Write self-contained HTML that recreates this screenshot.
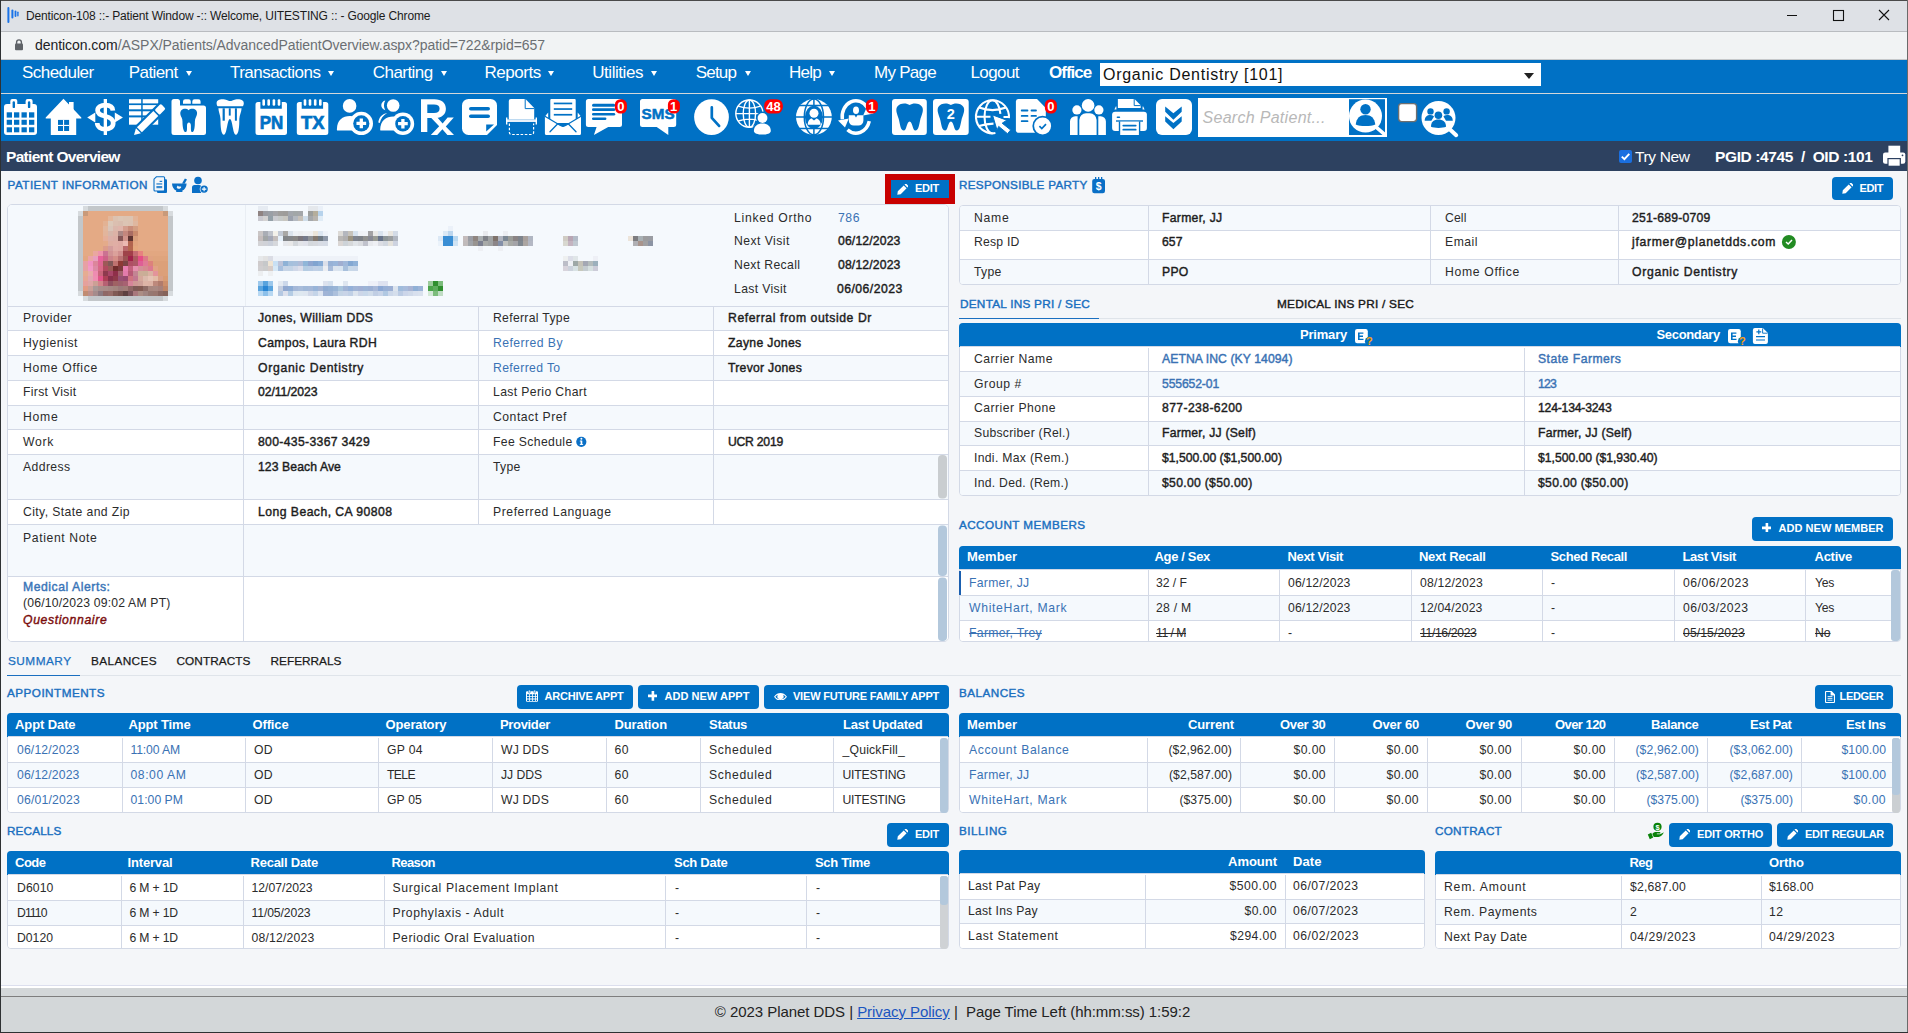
<!DOCTYPE html>
<html><head><meta charset="utf-8"><title>Denticon</title>
<style>
*{box-sizing:border-box;margin:0;padding:0}
html,body{width:1908px;height:1033px;overflow:hidden;background:#f4f6f9;font-family:"Liberation Sans",sans-serif;}
body{position:relative}
.abs{position:absolute}
#titlebar{left:0;top:0;width:1908px;height:32px;background:#dee1e6;border-top:1px solid #4a4a4a;border-bottom:1px solid #b9bcc0}
#titlebar .t{position:absolute;left:26px;top:8px;font-size:12px;line-height:14px;color:#1b1b1b;letter-spacing:-0.15px;white-space:nowrap}
#addr{left:0;top:32px;width:1908px;height:28px;background:#f1f3f4;border-bottom:1px solid #c6c8ca}
#addr .t{position:absolute;left:35px;top:5px;font-size:14px;line-height:16px;color:#202124;white-space:nowrap;letter-spacing:-0.05px}
#addr .t span{color:#6b6f73}
#winborderL{left:0;top:0;width:1px;height:1033px;background:#2e3133;z-index:50}
#winborderR{left:1907px;top:0;width:1px;height:1033px;background:#6a6a6a;z-index:50}
#winborderB{left:0;top:1032px;width:1908px;height:1px;background:#2e3133;z-index:50}
#menu{left:1px;top:60px;width:1906px;height:33px;background:#0071c5}
#menu .m{position:absolute;top:3px;font-size:17px;color:#fff;white-space:nowrap;letter-spacing:-0.35px}
#menu .m i{font-style:normal;font-size:9px;position:relative;top:-3px;margin-left:6px}
#menuline{left:1px;top:93px;width:1906px;height:1px;background:#d3d7da}
#toolbar{left:1px;top:94px;width:1906px;height:47px;background:#0071c5}
#navy{left:1px;top:141px;width:1906px;height:30px;background:#2d4160}
#navy .pt{position:absolute;left:5px;top:7px;font-size:15.5px;font-weight:bold;color:#fff;letter-spacing:-0.7px}
/* sections */
.sh{position:absolute;font-size:11.7px;font-weight:normal;-webkit-text-stroke:0.42px #1a6fc0;color:#1a6fc0;white-space:nowrap;letter-spacing:0.1px;line-height:13px}
.btn{position:absolute;height:24px;background:#0071c5;border-radius:4px;color:#fff;font-size:11.5px;font-weight:bold;white-space:nowrap;line-height:24px;text-align:left;letter-spacing:-0.5px}
table{border-collapse:collapse;table-layout:fixed;position:absolute}
td,th{font-size:13px;color:#2b2b2b;white-space:nowrap;overflow:hidden;text-align:left;vertical-align:middle;font-weight:normal}
.g td{border:1px solid #d3dde8;padding:0 0 0 15px}
.g tr:nth-child(odd) td{background:#f5f9fd}
.g tr:nth-child(even) td{background:#fff}
.b{font-weight:bold;color:#222;letter-spacing:-0.1px}
a,.lk{color:#3a6fb0;text-decoration:none}
th{background:#0071c5;color:#fff;font-weight:bold;font-size:13px;padding-left:8px;letter-spacing:-0.3px}
.r{text-align:right !important}
#footer{left:1px;top:996px;width:1906px;height:36px;background:#d3d7d9;border-top:1px solid #7e7e7e;font-size:15px;color:#222;line-height:30px;padding-left:713.8px;letter-spacing:-0.052px;white-space:nowrap}
#footer a{color:#1a55c0;text-decoration:underline}
</style></head><body>
<div id="titlebar" class="abs"><div class="t">Denticon-108 ::- Patient Window -:: Welcome, UITESTING :: - Google Chrome</div></div>
<div id="addr" class="abs"><div class="t">denticon.com<span>/ASPX/Patients/AdvancedPatientOverview.aspx?patid=722&amp;rpid=657</span></div></div>
<!--EXTRAS--><svg class="abs" style="left:0;top:0" width="1908" height="60" viewBox="0 0 1908 60">
<g fill="#1a73e8"><rect x="7.4" y="7" width="2" height="16" rx="1"/><rect x="11.4" y="9.5" width="2" height="9" rx="1"/><rect x="14.6" y="10.5" width="1.8" height="6.5" rx=".9"/><rect x="17.2" y="11.5" width="1.4" height="5" rx=".7"/></g>
<path d="M1787 15.5 H1797" stroke="#111" stroke-width="1"/><rect x="1833.5" y="10.5" width="10" height="10" fill="none" stroke="#111" stroke-width="1.1"/><path d="M1879 10 L1889 20 M1889 10 L1879 20" stroke="#111" stroke-width="1.1"/>
<rect x="15" y="43.6" width="8" height="6.6" rx="1" fill="#5f6368"/><path d="M16.6 44 V42.3 a2.4 2.4 0 0 1 4.8 0 V44" fill="none" stroke="#5f6368" stroke-width="1.4"/>
</svg><!--/EXTRAS-->
<div id="menu" class="abs">
<div class="m" style="left:21.1px;letter-spacing:-0.56px">Scheduler</div>
<div class="m" style="left:127.8px;letter-spacing:-0.59px">Patient</div>
<div class="abs" style="left:184.5px;top:11px;width:0;height:0;border-left:3.2px solid transparent;border-right:3.2px solid transparent;border-top:5.5px solid #fff"></div>
<div class="m" style="left:228.9px;letter-spacing:-0.51px">Transactions</div>
<div class="abs" style="left:327.4px;top:11px;width:0;height:0;border-left:3.2px solid transparent;border-right:3.2px solid transparent;border-top:5.5px solid #fff"></div>
<div class="m" style="left:371.8px;letter-spacing:-0.55px">Charting</div>
<div class="abs" style="left:439.6px;top:11px;width:0;height:0;border-left:3.2px solid transparent;border-right:3.2px solid transparent;border-top:5.5px solid #fff"></div>
<div class="m" style="left:483.5px;letter-spacing:-0.45px">Reports</div>
<div class="abs" style="left:546.7px;top:11px;width:0;height:0;border-left:3.2px solid transparent;border-right:3.2px solid transparent;border-top:5.5px solid #fff"></div>
<div class="m" style="left:591.2px;letter-spacing:-0.44px">Utilities</div>
<div class="abs" style="left:650.4px;top:11px;width:0;height:0;border-left:3.2px solid transparent;border-right:3.2px solid transparent;border-top:5.5px solid #fff"></div>
<div class="m" style="left:694.8px;letter-spacing:-0.83px">Setup</div>
<div class="abs" style="left:743.5px;top:11px;width:0;height:0;border-left:3.2px solid transparent;border-right:3.2px solid transparent;border-top:5.5px solid #fff"></div>
<div class="m" style="left:787.9px;letter-spacing:-0.69px">Help</div>
<div class="abs" style="left:828.0px;top:11px;width:0;height:0;border-left:3.2px solid transparent;border-right:3.2px solid transparent;border-top:5.5px solid #fff"></div>
<div class="m" style="left:873.0px;letter-spacing:-0.74px">My Page</div>
<div class="m" style="left:969.5px;letter-spacing:-0.58px">Logout</div>
<div class="m" style="left:1048px;font-weight:bold;letter-spacing:-1px">Office</div>
<div class="abs" style="left:1099px;top:3px;width:441px;height:23px;background:#fff;font-size:16px;line-height:23px;color:#111;padding-left:3px;letter-spacing:0.72px;white-space:nowrap">Organic Dentistry [101]</div><div class="abs" style="left:1523px;top:13px;width:0;height:0;border-left:5.5px solid transparent;border-right:5.5px solid transparent;border-top:6px solid #222"></div>
</div>
<div id="menuline" class="abs"></div>
<div id="toolbar" class="abs"></div>
<!--TB--><svg class="abs" style="left:0;top:94px" width="1908" height="47" viewBox="0 94 1908 47">
<rect x="4" y="104" width="33" height="31" rx="3" fill="#fff"/>
<rect x="10.3" y="99" width="7" height="10.5" rx="2" fill="#fff"/><rect x="25.6" y="99" width="7" height="10.5" rx="2" fill="#fff"/>
<rect x="12.6" y="101.3" width="2.4" height="6.8" rx="1.2" fill="#0071c5"/><rect x="27.9" y="101.3" width="2.4" height="6.8" rx="1.2" fill="#0071c5"/>
<g fill="#0071c5"><rect x="6.7" y="112.3" width="5.3" height="5.3"/><rect x="14" y="112.3" width="5.3" height="5.3"/><rect x="21.5" y="112.3" width="5.3" height="5.3"/><rect x="29" y="112.3" width="5.3" height="5.3"/>
<rect x="6.7" y="119.8" width="5.3" height="5"/><rect x="14" y="119.8" width="5.3" height="5"/><rect x="21.5" y="119.8" width="5.3" height="5"/><rect x="29" y="119.8" width="5.3" height="5"/>
<rect x="6.7" y="127.3" width="5.3" height="5"/><rect x="14" y="127.3" width="5.3" height="5"/><rect x="21.5" y="127.3" width="5.3" height="5"/><rect x="29" y="127.3" width="5.3" height="5"/></g>

<path d="M63.5 98.8 L81.3 117.6 V118.6 H76.2 V135 H50.8 V118.6 H45.7 V117.6 Z" fill="#fff"/>
<rect x="69" y="102" width="4.6" height="10" fill="#fff"/>
<rect x="58" y="119.9" width="11.1" height="11.1" fill="#0071c5"/><rect x="63" y="119.9" width="1.1" height="11.1" fill="#fff"/><rect x="58" y="124.9" width="11.1" height="1.1" fill="#fff"/>

<path d="M87.2 117.6 L95.3 112.6 V122.6 Z M122.9 117.6 L114.8 112.6 V122.6 Z" fill="#fff"/>
<rect x="103.7" y="99" width="3.3" height="36" fill="#fff"/><path d="M112.9 110.6 C112.6 106.6 109.4 105.2 105.3 105.2 C101 105.2 97.6 107 97.6 110.4 C97.6 113.8 100.6 115.2 105.3 116.3 C110.4 117.5 113.2 119.2 113.2 123 C113.2 127 109.8 129.1 105.3 129.1 C100.6 129.1 97.4 127 97.2 123" fill="none" stroke="#fff" stroke-width="4.7"/>

<g fill="#fff"><rect x="129" y="99.2" width="12.2" height="4.2"/><rect x="142.7" y="99.2" width="15.5" height="4.2"/>
<rect x="129" y="105.1" width="12.2" height="4.2"/><rect x="142.7" y="105.1" width="15.5" height="4.2"/>
<rect x="129" y="111.3" width="12.2" height="4.1"/><rect x="142.7" y="111.3" width="15.5" height="4.1"/>
<rect x="129" y="117.4" width="12.2" height="7.3"/><rect x="142.7" y="117.4" width="15.5" height="7.3"/></g>
<g transform="translate(134,135) rotate(-44.5)"><path d="M-3 0 L6 -5.6 H41 a2.5 2.5 0 0 1 2.5 2.5 V3.1 a2.5 2.5 0 0 1 -2.5 2.5 H6 Z" fill="#0071c5"/>
<path d="M0 0 L6.2 -3.5 V3.5 Z" fill="#fff"/><rect x="7.6" y="-3.5" width="23" height="7" fill="#fff"/><rect x="32.2" y="-3.5" width="8.8" height="7" rx="1.5" fill="#fff"/></g>

<path d="M174.4 98.9 H177.5 a2.5 2.5 0 0 1 2.5 2.5 V105.6 H203.5 a2.5 2.5 0 0 1 2.5 2.5 V132.5 a2.5 2.5 0 0 1 -2.5 2.5 H174 a2.5 2.5 0 0 1 -2.5 -2.5 V101.4 a2.5 2.5 0 0 1 2.5 -2.5 Z" fill="#fff"/>
<path d="M183 103.8 V101.5 a2.2 2.2 0 0 1 2.2 -2.2 H188.6 a2.2 2.2 0 0 1 2.2 2.2 V103.8 Z M192.3 103.8 V101.5 a2.2 2.2 0 0 1 2.2 -2.2 H198.4 a2.2 2.2 0 0 1 2.2 2.2 V103.8 Z" fill="#fff"/>
<path d="M188.6 110.2 C187 108.6 183.5 108.2 181.6 110 C179.6 112 180.2 115 181.6 117.5 C182.8 119.8 182.4 122.5 182.6 125 C182.9 128.5 183.8 132.1 185.6 132.1 C187.2 132.1 187 129 187 126 C187 124 187.6 122.6 188.9 122.6 C190.2 122.6 190.9 124 190.9 126 C190.9 129 190.8 132.1 192.2 132.1 C194 132.1 194.6 128.5 194.8 125 C195 122.5 194.6 119.8 195.8 117.5 C197.2 115 197.8 112 195.8 110 C193.9 108.2 190.2 108.6 188.6 110.2 Z" fill="#0071c5"/>

<path d="M216.6 103 C216.6 99.5 221 98.6 225 99.4 C227.5 99.9 228.8 101 230.2 101 C231.6 101 232.9 99.9 235.4 99.4 C239.4 98.6 243.8 99.5 243.8 103 C243.8 105 243.2 106.2 242.6 106.2 H217.8 C217.2 106.2 216.6 105 216.6 103 Z" fill="#fff"/>
<path d="M218.4 108.3 H241.6 C241.4 112 239.6 115 239.3 119 C239.4 126 238.8 134.8 235.8 134.8 C232.8 134.8 232.6 119 229.9 119 C227.2 119 227 134.8 224 134.8 C221 134.8 220.4 126 220.5 119 C220.2 115 218.6 112 218.4 108.3 Z" fill="#fff"/>
<g fill="#0071c5"><rect x="222.6" y="108.3" width="2.2" height="12.4"/><rect x="228.8" y="108.3" width="1.9" height="7.3"/><rect x="234.9" y="108.3" width="2" height="12.4"/></g>

<g id="calpn"><path d="M255.5 104.5 a2.5 2.5 0 0 1 2.5 -2.5 H260.4 V108.7 H281.8 V102 H284.5 a2.5 2.5 0 0 1 2.5 2.5 V132.5 a2.5 2.5 0 0 1 -2.5 2.5 H258 a2.5 2.5 0 0 1 -2.5 -2.5 Z" fill="#fff"/>
<g fill="#fff"><rect x="262.4" y="99.2" width="2.6" height="6.6" rx="1.2"/><rect x="267.4" y="99.2" width="2.6" height="6.6" rx="1.2"/><rect x="272.6" y="99.2" width="2.6" height="6.6" rx="1.2"/><rect x="277.7" y="99.2" width="2.6" height="6.6" rx="1.2"/></g></g>
<use href="#calpn" x="41.3"/>
<text x="271.4" y="128.9" font-family="Liberation Sans" font-weight="bold" font-size="18" text-anchor="middle" fill="#0071c5" stroke="#0071c5" stroke-width="0.7" textLength="23.5" lengthAdjust="spacingAndGlyphs">PN</text>
<text x="312.8" y="128.9" font-family="Liberation Sans" font-weight="bold" font-size="18" text-anchor="middle" fill="#0071c5" stroke="#0071c5" stroke-width="0.7" textLength="23.5" lengthAdjust="spacingAndGlyphs">TX</text>

<g id="pplus"><circle cx="349.6" cy="105.9" r="6.8" fill="#fff"/><path d="M336.9 129.4 C337 120 342.5 116 350 116 C357.5 116 362.5 120 363 130.6 H338 C337.2 130.6 336.9 130.2 336.9 129.4 Z" fill="#fff"/>
<circle cx="361.3" cy="123.4" r="11.7" fill="#fff"/><circle cx="361.3" cy="123.4" r="8.1" fill="#0071c5"/>
<path d="M359.65 118.6 h3.3 v3.15 h3.2 v3.3 h-3.2 v3.15 h-3.3 v-3.15 h-3.2 v-3.3 h3.2 z" fill="#fff"/></g>

<path d="M385.3 100.6 C380.5 101.5 379.5 108.5 385.3 110.2 C383.5 107.5 383.5 103.5 385.3 100.6 Z" fill="#fff"/>
<path d="M378.3 122.6 C378.8 117 382.5 113.6 387.2 112.9 C383 115.5 380.8 118.5 379.8 122.9 Z" fill="#fff"/>
<circle cx="393.2" cy="105.5" r="6.3" fill="#fff"/><path d="M380.2 129.4 C380.3 120.5 386 116.4 393.4 116.4 C400 116.4 404 120 404.5 130.6 H381.3 C380.5 130.6 380.2 130.2 380.2 129.4 Z" fill="#fff"/>
<circle cx="402.9" cy="123.7" r="11.3" fill="#fff"/><circle cx="402.9" cy="123.7" r="7.7" fill="#0071c5"/>
<path d="M401.25 118.9 h3.3 v3.15 h3.2 v3.3 h-3.2 v3.15 h-3.3 v-3.15 h-3.2 v-3.3 h3.2 z" fill="#fff"/>

<path fill-rule="evenodd" d="M421 99.2 H434.5 C441.6 99.2 445.9 102.8 445.9 108.7 C445.9 114.5 441.6 118.1 434.5 118.1 H427.3 V131.9 H421 Z M427.3 104.5 V112.9 H434 C437.6 112.9 439.6 111.5 439.6 108.7 C439.6 105.9 437.6 104.5 434 104.5 Z" fill="#fff"/>
<path d="M430.8 117.4 H437.4 L442.6 123.4 L447.6 117.4 H453.8 L445.8 126.4 L454 135 H447.4 L442.4 129.2 L437.2 135 H430.8 L439.2 126.2 Z" fill="#fff"/>

<path d="M468.5 98.9 H490.5 a6.5 6.5 0 0 1 6.5 6.5 V125 L487 135 H468.5 a6.5 6.5 0 0 1 -6.5 -6.5 V105.4 a6.5 6.5 0 0 1 6.5 -6.5 Z" fill="#fff"/>
<path d="M486.2 124.4 H494 L486.2 131.6 Z" fill="#0071c5"/>
<rect x="469" y="106.9" width="21" height="3.6" rx="1.8" fill="#0071c5"/><rect x="469" y="114.5" width="21" height="3.6" rx="1.8" fill="#0071c5"/>

<path d="M508.8 101 a2 2 0 0 1 2 -2 H525.5 L534.2 108 V119.5 H508.8 Z" fill="#fff"/>
<path d="M525.2 99 V108.6 H534.2" fill="none" stroke="#0071c5" stroke-width="1"/>
<rect x="506" y="119.4" width="31" height="2.6" fill="#e6f0fa"/><rect x="506" y="117.5" width="1.4" height="7" fill="#fff"/><rect x="535.6" y="117.5" width="1.4" height="7" fill="#fff"/>
<path d="M509.4 123.5 V132.5 a2 2 0 0 0 2 2 H531.6 a2 2 0 0 0 2 -2 V123.5" fill="none" stroke="#fff" stroke-width="1.2" stroke-dasharray="2.6 1.6"/>

<path d="M544.9 116.5 L548.2 112.5 V119 Z M581 116.5 L577.7 112.5 V119 Z" fill="#fff"/>
<rect x="550.3" y="99" width="25.4" height="24" rx="1" fill="#fff"/>
<path d="M544.9 116.3 L563 127 L581 116.3 V133.5 a1.5 1.5 0 0 1 -1.5 1.5 H546.4 a1.5 1.5 0 0 1 -1.5 -1.5 Z" fill="#fff"/>
<path d="M544.9 116.3 L560 125.2 Q563 126.8 566 125.2 L581 116.3" fill="none" stroke="#0071c5" stroke-width="1.3"/>
<path d="M557.5 124 L550 131.8 M568.5 124 L576 131.8" fill="none" stroke="#0071c5" stroke-width="1.3" stroke-linecap="round"/>
<g fill="#0071c5"><rect x="553.8" y="102.6" width="18.4" height="1.7"/><rect x="553.8" y="108.2" width="18.4" height="1.7"/><rect x="553.8" y="113.9" width="18.4" height="1.7"/></g>

<path d="M588.4 99 H619.5 a2.5 2.5 0 0 1 2.5 2.5 V124.5 a2.5 2.5 0 0 1 -2.5 2.5 H608.2 L593.9 135 L596.6 127 H588.4 a2.5 2.5 0 0 1 -2.5 -2.5 V101.5 a2.5 2.5 0 0 1 2.5 -2.5 Z" fill="#fff"/>
<g fill="#0071c5"><rect x="592" y="103.8" width="23.2" height="3" rx="1.5"/><rect x="592" y="108.3" width="23.2" height="2.7" rx="1.3"/><rect x="592" y="112.9" width="23.2" height="2.6" rx="1.3"/><rect x="592" y="117.4" width="14.4" height="2.5" rx="1.2"/></g>
<g id="bdg"><rect x="614.9" y="99.2" width="12" height="14.4" rx="5.5" fill="#f00"/></g>
<text x="620.9" y="111.2" font-family="Liberation Sans" font-weight="bold" font-size="13" text-anchor="middle" fill="#fff">0</text>

<path d="M642.5 99 H673.7 a2.5 2.5 0 0 1 2.5 2.5 V124.5 a2.5 2.5 0 0 1 -2.5 2.5 H668.3 V135 L656.7 127 H642.5 a2.5 2.5 0 0 1 -2.5 -2.5 V101.5 a2.5 2.5 0 0 1 2.5 -2.5 Z" fill="#fff"/>
<text x="658.1" y="119.1" font-family="Liberation Sans" font-weight="bold" font-size="15" text-anchor="middle" fill="#0071c5" stroke="#0071c5" stroke-width="0.5" textLength="33" lengthAdjust="spacingAndGlyphs">SMS</text>
<use href="#bdg" x="53"/>
<text x="673.7" y="111.2" font-family="Liberation Sans" font-weight="bold" font-size="13" text-anchor="middle" fill="#fff">1</text>

<ellipse cx="711.5" cy="117.1" rx="17.4" ry="17.9" fill="#fff"/>
<path d="M711.8 107.4 V117.8 L719.1 125.9" fill="none" stroke="#0071c5" stroke-width="2.7" stroke-linecap="round" stroke-linejoin="round"/>

<g fill="none" stroke="#fff" stroke-width="1.4"><circle cx="749.4" cy="113.6" r="13.6"/><ellipse cx="749.4" cy="113.6" rx="6.2" ry="13.6"/><path d="M749.4 100 V127.2 M735.8 113.6 H763 M738.2 106.2 Q749.4 110 760.6 106.2 M738.2 121 Q749.4 117.2 760.6 121"/></g>
<circle cx="762.5" cy="118" r="6.4" fill="#0071c5"/><ellipse cx="762.4" cy="129.5" rx="10" ry="7.5" fill="#0071c5"/>
<circle cx="762.5" cy="118" r="4.9" fill="#fff"/><path d="M753.9 131 C753.9 126 757.5 123.4 762.4 123.4 C767.3 123.4 770.8 126 770.8 131 C770.8 133.5 767 134.6 762.4 134.6 C757.8 134.6 753.9 133.5 753.9 131 Z" fill="#fff"/>
<rect x="764.1" y="99.2" width="18.8" height="14.4" rx="6.5" fill="#f00"/>
<text x="773.5" y="111.2" font-family="Liberation Sans" font-weight="bold" font-size="13" text-anchor="middle" fill="#fff" textLength="14.5" lengthAdjust="spacingAndGlyphs">48</text>

<circle cx="813.9" cy="117" r="17.9" fill="#fff"/>
<g fill="none" stroke="#0071c5" stroke-width="1.5"><path d="M796 117 H832 M799 105.6 H829 M799 128.4 H829"/><ellipse cx="813.9" cy="117" rx="9.6" ry="17.9"/><path d="M813.9 99 V135"/></g>
<ellipse cx="813.9" cy="117.3" rx="9" ry="11.6" fill="#0071c5"/>
<circle cx="814" cy="113.2" r="4.5" fill="#fff"/><path d="M807.8 124.8 C807.8 120.5 810 118.6 811.6 118.5 L814 120.6 L816.4 118.5 C818 118.6 820.7 120.5 820.7 124.8 Z" fill="#fff"/>

<path d="M869.3 121.2 A13.8 16.2 0 0 1 847.5 129.8" fill="none" stroke="#fff" stroke-width="3.5"/>
<path d="M842.3 119.3 A13.8 16.2 0 0 1 867.3 107.7" fill="none" stroke="#fff" stroke-width="3.5"/>
<path d="M838 120.4 L848.8 118.6 L845 127.6 Z" fill="#fff"/>
<path d="M873.6 113.6 L863.2 115.4 L867 106.8 Z" fill="#fff"/>
<ellipse cx="856" cy="110.2" rx="3" ry="3.8" fill="#fff"/>
<path d="M848.8 115.3 H854.6 L856 117.6 L857.4 115.3 H863.4 V120.6 a5 5 0 0 1 -5 5 H853.8 a5 5 0 0 1 -5 -5 Z" fill="#fff"/>
<use href="#bdg" x="251"/>
<text x="871.9" y="111.2" font-family="Liberation Sans" font-weight="bold" font-size="13" text-anchor="middle" fill="#fff">1</text>

<rect x="892" y="99" width="34.8" height="36" rx="3" fill="#fff"/>
<path id="bt" d="M909.6 105 C906.5 102.6 899.5 102.6 897 107 C895 111 898 115.5 899 120 C900 124.5 900.6 130.6 903.8 130.6 C906.8 130.6 906.6 121.5 909.6 121.5 C912.6 121.5 912.4 130.6 915.4 130.6 C918.6 130.6 919.2 124.5 920.2 120 C921.2 115.5 924.2 111 922.2 107 C919.7 102.6 912.7 102.6 909.6 105 Z" fill="#0071c5"/>
<rect x="933" y="99" width="35.7" height="36" rx="3" fill="#fff"/>
<use href="#bt" x="41.3"/>
<text x="950.9" y="118.6" font-family="Liberation Sans" font-weight="bold" font-size="14.5" text-anchor="middle" fill="#fff">2</text>

<g fill="none" stroke="#fff" stroke-width="2.1"><path d="M995.4 133.05 A16.5 16.5 0 1 1 1008.9 118.2"/><path d="M992.5 100.3 A8 16.5 0 0 0 992.5 133.3 M992.5 100.3 A8 16.5 0 0 1 1000.4 113.9 M979 107.6 Q992.5 112.6 1006 107.6 M976 116.8 H990.5 M1003.5 117 H1009 M979 126 Q986 123.8 993.5 123.6"/></g>
<path d="M992.5 114.9 L1006.8 120.2 L1002.2 123.2 L1010.7 130 L1007.5 133.7 L998.7 126.4 L997 130.2 Z" fill="#fff" stroke="#0071c5" stroke-width="1" stroke-linejoin="round"/>

<path d="M1018.4 99 H1037 L1045.8 108 V130.3 a2.5 2.5 0 0 1 -2.5 2.5 H1018.4 a2.5 2.5 0 0 1 -2.5 -2.5 V101.5 a2.5 2.5 0 0 1 2.5 -2.5 Z" fill="#fff"/>
<g fill="#0071c5"><rect x="1020.8" y="109.6" width="7.6" height="1.8" rx=".9"/><rect x="1030.6" y="109.6" width="6.3" height="1.8" rx=".9"/><rect x="1020.8" y="115" width="7.6" height="1.8" rx=".9"/><rect x="1030.6" y="115" width="6.3" height="1.8" rx=".9"/><rect x="1020.8" y="120.3" width="7.6" height="1.8" rx=".9"/></g>
<circle cx="1042.6" cy="126" r="10.2" fill="#0071c5"/><circle cx="1042.6" cy="126" r="8.5" fill="#fff"/>
<path d="M1039.4 126.2 L1041.8 128.6 L1046 124.2" fill="none" stroke="#0071c5" stroke-width="1.7"/>
<use href="#bdg" x="430"/>
<text x="1050.9" y="111.2" font-family="Liberation Sans" font-weight="bold" font-size="13" text-anchor="middle" fill="#fff">0</text>

<circle cx="1076.9" cy="109.9" r="4.6" fill="#fff"/><circle cx="1098.9" cy="109.9" r="4.6" fill="#fff"/><circle cx="1088.1" cy="105.4" r="6.3" fill="#fff"/>
<path d="M1070 135 V121.5 a5.2 5.2 0 0 1 5.2 -5.2 H1077.6 V135 Z M1105.9 135 V121.5 a5.2 5.2 0 0 0 -5.2 -5.2 H1098.3 V135 Z" fill="#fff"/>
<path d="M1079.3 135 V120 a6.8 6.8 0 0 1 6.8 -6.8 H1089.8 a6.8 6.8 0 0 1 6.8 6.8 V135 Z" fill="#fff"/>

<path d="M1117.9 108 V99 H1134.5 L1140.7 105.2 V108 Z" fill="#fff"/><path d="M1134.2 99 V105.6 H1140.7" fill="none" stroke="#0071c5" stroke-width="1"/>
<path d="M1114.4 109.6 L1115.8 106.6 H1116.4 V109.6 Z M1144.6 109.6 L1143.2 106.6 H1142.6 V109.6 Z" fill="#fff"/>
<rect x="1112.1" y="111.8" width="34.8" height="19.2" rx="3" fill="#fff"/>
<rect x="1116.6" y="116.4" width="3.6" height="1.6" rx=".8" fill="#0071c5"/>
<rect x="1116" y="120.3" width="27" height="1.4" fill="#0071c5"/>
<rect x="1118.8" y="121.6" width="21.5" height="14" fill="#0071c5"/><rect x="1120.2" y="121.6" width="18.7" height="13.4" fill="#fff"/>
<rect x="1122.4" y="124.7" width="14.2" height="1.8" rx=".9" fill="#0071c5"/><rect x="1122.4" y="128.8" width="14.2" height="1.8" rx=".9" fill="#0071c5"/>

<rect x="1156" y="99" width="36" height="36" rx="6" fill="#fff"/>
<path d="M1165.2 106.5 L1173.4 113.2 L1181.7 106.5 V111.8 L1173.4 119.8 L1165.2 111.8 Z M1165.2 116.3 L1173.4 123 L1181.7 116.3 V121.6 L1173.4 129.2 L1165.2 121.6 Z" fill="#0071c5"/>

<rect x="1198" y="98" width="189" height="39" fill="#fff"/>
<rect x="1349" y="99.2" width="36" height="35.8" fill="#0071c5"/>
<path d="M1377 127.9 L1384.6 134.4" stroke="#fff" stroke-width="3.6" stroke-linecap="round"/>
<circle cx="1365.5" cy="116.1" r="16.5" fill="#fff"/>
<circle cx="1365.5" cy="109.2" r="5.2" fill="#0071c5"/><path d="M1355.7 124.5 C1356.5 118 1360 115 1365.5 115 C1371 115 1374.5 118 1375.3 124.5 C1371 126.5 1360 126.5 1355.7 124.5 Z" fill="#0071c5"/>
<text x="1202.5" y="122.6" font-family="Liberation Sans" font-style="italic" font-size="16" fill="#b8b8b8" textLength="123" lengthAdjust="spacing">Search Patient...</text>

<rect x="1398.6" y="103.6" width="18" height="18" rx="3" fill="#fff" stroke="#6f6f6f" stroke-width="1.4"/>

<path d="M1450 129.5 L1456.2 135.2" stroke="#fff" stroke-width="4" stroke-linecap="round"/>
<circle cx="1438.5" cy="118" r="17" fill="#fff"/>
<g fill="#0071c5"><circle cx="1430.5" cy="111.4" r="3.2"/><circle cx="1446.6" cy="111.4" r="3.2"/>
<path d="M1424.7 120.7 C1424.7 117 1427 115 1430.5 115 C1432.5 115 1433.5 115.8 1434 116.5 L1431.4 120.7 Z M1452.8 120.7 C1452.8 117 1450.5 115 1447 115 C1445 115 1444 115.8 1443.5 116.5 L1446 120.7 Z"/>
<circle cx="1438.4" cy="115.2" r="4.6" fill="#fff"/><circle cx="1438.4" cy="115.2" r="3.8"/>
<path d="M1431 126.8 C1431 122 1434 119.6 1438.4 119.6 C1442.8 119.6 1446 122 1446 126.8 C1443 128.3 1434 128.3 1431 126.8 Z"/></g>
</svg><!--/TB-->
<div id="navy" class="abs"><div class="pt">Patient Overview</div><div class="abs" style="left:1618px;top:9px;width:13px;height:13px;background:#1a6fe0;border-radius:2px"></div><svg class="abs" style="left:1618px;top:9px" width="13" height="13" viewBox="0 0 13 13"><path d="M2.8 6.6 L5.4 9.2 L10.3 3.8" fill="none" stroke="#fff" stroke-width="1.9"/></svg>
<div class="abs" style="left:1634px;top:7px;font-size:15.5px;color:#fff;letter-spacing:-0.35px">Try New</div>
<div class="abs" style="left:1714px;top:7px;font-size:15.5px;color:#fff;font-weight:bold;letter-spacing:-0.38px;white-space:nowrap">PGID :4745&nbsp; /&nbsp; OID :101</div>
<svg class="abs" style="left:1881px;top:4px" width="24" height="22" viewBox="0 0 24 22"><rect x="6.4" y="0.7" width="11.8" height="8.5" fill="#fff"/><rect x="1" y="7.4" width="22.3" height="11.4" rx="2.2" fill="#fff"/><rect x="5.4" y="13" width="13.5" height="8.2" fill="#2d4160"/><rect x="6.6" y="14.2" width="11.1" height="6.5" fill="#fff"/><rect x="19.6" y="9.6" width="1.8" height="1.6" rx=".8" fill="#2d4160"/></svg></div>
<!--LEFT--><style>
.row{position:absolute;left:0;width:100%;border-top:1px solid #d3d9e6}
.row.o{background:#f5f9fd}.row.e{background:#fff}
.c{position:absolute;top:0;height:100%;border-left:1px solid #d3d9e6;padding-left:14px;font-size:12.2px;color:#2b2b2b;white-space:nowrap;line-height:24.6px;letter-spacing:0.5px}
.c.lk{color:#3a72b4}
.c.first{border-left:none;padding-left:15px}
.c.b{font-weight:normal;-webkit-text-stroke:0.42px currentColor;color:#1d1d1d;letter-spacing:0.5px}
.row.u .c{line-height:22.6px}
.box{position:absolute;border:1px solid #d3d9e6;border-radius:5px;overflow:hidden;background:#fff}
.lo{font-size:12.2px;line-height:16px;color:#2b2b2b;letter-spacing:0.5px;white-space:nowrap}.lo.b{font-weight:normal;-webkit-text-stroke:0.42px currentColor;color:#1c1c1c}.lo.lk{color:#3a72b4}
</style>
<div class="box" id="pi" style="left:7px;top:204px;width:942px;height:438px">
 <div class="row o" style="top:0;height:102px;border-top:none">
  <div class="c first" style="left:0;width:235px"></div>
  <div class="c" style="left:237px;width:705px;border-left-color:#e9eef4"></div>
  <!--PHOTO--><svg class="abs" style="left:70px;top:1px" width="95" height="95" viewBox="0 0 95 95" shape-rendering="crispEdges"><rect x="5" y="0" width="85" height="5" fill="#c3c7ca"/><rect x="5" y="90" width="85" height="5" fill="#c3c7ca"/><rect x="0" y="5" width="5" height="85" fill="#c3c7ca"/><rect x="90" y="5" width="5" height="85" fill="#c3c7ca"/><rect x="5" y="0" width="5" height="5" fill="#d7dbde"/><rect x="85" y="0" width="5" height="5" fill="#d7dbde"/><rect x="0" y="5" width="5" height="5" fill="#d7dbde"/><rect x="90" y="5" width="5" height="5" fill="#d7dbde"/><rect x="0" y="85" width="5" height="5" fill="#d7dbde"/><rect x="90" y="85" width="5" height="5" fill="#d7dbde"/><rect x="5" y="90" width="5" height="5" fill="#d7dbde"/><rect x="85" y="90" width="5" height="5" fill="#d7dbde"/><rect x="5" y="5" width="5" height="5" fill="#c99a7a"/><rect x="10" y="5" width="75" height="5" fill="#e4aa85"/><rect x="85" y="5" width="5" height="5" fill="#c99a7a"/><rect x="5" y="10" width="25" height="5" fill="#e4aa85"/><rect x="30" y="10" width="5" height="5" fill="#e3b79b"/><rect x="35" y="10" width="5" height="5" fill="#dcc2b0"/><rect x="40" y="10" width="5" height="5" fill="#dcc6b5"/><rect x="45" y="10" width="10" height="5" fill="#dcc4b2"/><rect x="55" y="10" width="5" height="5" fill="#e3b497"/><rect x="60" y="10" width="30" height="5" fill="#e4aa85"/><rect x="5" y="15" width="20" height="5" fill="#e4aa85"/><rect x="25" y="15" width="5" height="5" fill="#e3b293"/><rect x="30" y="15" width="5" height="5" fill="#dcc8b8"/><rect x="35" y="15" width="5" height="5" fill="#dbbfb0"/><rect x="40" y="15" width="5" height="5" fill="#d9bdae"/><rect x="45" y="15" width="5" height="5" fill="#dcc4b4"/><rect x="50" y="15" width="5" height="5" fill="#dcc2b1"/><rect x="55" y="15" width="5" height="5" fill="#dfb79f"/><rect x="60" y="15" width="30" height="5" fill="#e4aa85"/><rect x="5" y="20" width="20" height="5" fill="#e4aa85"/><rect x="25" y="20" width="5" height="5" fill="#e2b79d"/><rect x="30" y="20" width="5" height="5" fill="#d9c4b8"/><rect x="35" y="20" width="5" height="5" fill="#dbb7ab"/><rect x="40" y="20" width="5" height="5" fill="#e0b5ab"/><rect x="45" y="20" width="5" height="5" fill="#d49e8e"/><rect x="50" y="20" width="5" height="5" fill="#c98d7a"/><rect x="55" y="20" width="5" height="5" fill="#d39e82"/><rect x="60" y="20" width="30" height="5" fill="#e4aa85"/><rect x="5" y="25" width="20" height="5" fill="#e4aa85"/><rect x="25" y="25" width="5" height="5" fill="#e2b59c"/><rect x="30" y="25" width="5" height="5" fill="#d6b6aa"/><rect x="35" y="25" width="5" height="5" fill="#dcb2a6"/><rect x="40" y="25" width="5" height="5" fill="#ab8784"/><rect x="45" y="25" width="5" height="5" fill="#c4877d"/><rect x="50" y="25" width="5" height="5" fill="#a96d63"/><rect x="55" y="25" width="5" height="5" fill="#c98a6c"/><rect x="60" y="25" width="30" height="5" fill="#e4aa85"/><rect x="5" y="30" width="20" height="5" fill="#e4aa85"/><rect x="25" y="30" width="5" height="5" fill="#e5af99"/><rect x="30" y="30" width="5" height="5" fill="#dcb0a8"/><rect x="35" y="30" width="5" height="5" fill="#dcaea5"/><rect x="40" y="30" width="5" height="5" fill="#855656"/><rect x="45" y="30" width="5" height="5" fill="#d0948b"/><rect x="50" y="30" width="5" height="5" fill="#5e3431"/><rect x="55" y="30" width="5" height="5" fill="#d89f7c"/><rect x="60" y="30" width="30" height="5" fill="#e4aa85"/><rect x="5" y="35" width="20" height="5" fill="#e4aa85"/><rect x="25" y="35" width="5" height="5" fill="#e4ab8a"/><rect x="30" y="35" width="5" height="5" fill="#deaea2"/><rect x="35" y="35" width="5" height="5" fill="#e0aea5"/><rect x="40" y="35" width="5" height="5" fill="#dfaaa3"/><rect x="45" y="35" width="5" height="5" fill="#ebb9b1"/><rect x="50" y="35" width="5" height="5" fill="#b1644f"/><rect x="55" y="35" width="5" height="5" fill="#e1a57f"/><rect x="60" y="35" width="30" height="5" fill="#e4aa85"/><rect x="5" y="40" width="20" height="5" fill="#e4aa85"/><rect x="25" y="40" width="5" height="5" fill="#dc9c8a"/><rect x="30" y="40" width="5" height="5" fill="#d39c9c"/><rect x="35" y="40" width="5" height="5" fill="#e0aba5"/><rect x="40" y="40" width="5" height="5" fill="#dfa8a2"/><rect x="45" y="40" width="5" height="5" fill="#b9686a"/><rect x="50" y="40" width="5" height="5" fill="#b4664e"/><rect x="55" y="40" width="5" height="5" fill="#e4a87e"/><rect x="60" y="40" width="30" height="5" fill="#e4aa85"/><rect x="5" y="45" width="10" height="5" fill="#e4aa85"/><rect x="15" y="45" width="5" height="5" fill="#eaa7a0"/><rect x="20" y="45" width="5" height="5" fill="#ee94ab"/><rect x="25" y="45" width="5" height="5" fill="#cb7292"/><rect x="30" y="45" width="5" height="5" fill="#d19394"/><rect x="35" y="45" width="5" height="5" fill="#dba19b"/><rect x="40" y="45" width="5" height="5" fill="#d08f8e"/><rect x="45" y="45" width="5" height="5" fill="#9e4349"/><rect x="50" y="45" width="5" height="5" fill="#a23f49"/><rect x="55" y="45" width="5" height="5" fill="#c66c72"/><rect x="60" y="45" width="5" height="5" fill="#e7827f"/><rect x="65" y="45" width="25" height="5" fill="#e2a781"/><rect x="5" y="50" width="5" height="5" fill="#e3a781"/><rect x="10" y="50" width="5" height="5" fill="#eba4a6"/><rect x="15" y="50" width="5" height="5" fill="#e89fbd"/><rect x="20" y="50" width="5" height="5" fill="#e7629a"/><rect x="25" y="50" width="5" height="5" fill="#cd6287"/><rect x="30" y="50" width="5" height="5" fill="#cb8389"/><rect x="35" y="50" width="5" height="5" fill="#d48e87"/><rect x="40" y="50" width="5" height="5" fill="#bc7274"/><rect x="45" y="50" width="5" height="5" fill="#9c5252"/><rect x="50" y="50" width="5" height="5" fill="#a02249"/><rect x="55" y="50" width="5" height="5" fill="#ad5a5f"/><rect x="60" y="50" width="5" height="5" fill="#e54d85"/><rect x="65" y="50" width="5" height="5" fill="#dd7a88"/><rect x="70" y="50" width="5" height="5" fill="#e0a281"/><rect x="75" y="50" width="15" height="5" fill="#dfa47d"/><rect x="5" y="55" width="5" height="5" fill="#e8a0a4"/><rect x="10" y="55" width="5" height="5" fill="#f193c2"/><rect x="15" y="55" width="5" height="5" fill="#dc869b"/><rect x="20" y="55" width="5" height="5" fill="#de6692"/><rect x="25" y="55" width="5" height="5" fill="#9d5957"/><rect x="30" y="55" width="5" height="5" fill="#815958"/><rect x="35" y="55" width="5" height="5" fill="#bf7370"/><rect x="40" y="55" width="5" height="5" fill="#8e3a36"/><rect x="45" y="55" width="5" height="5" fill="#7c4445"/><rect x="50" y="55" width="5" height="5" fill="#b04f65"/><rect x="55" y="55" width="5" height="5" fill="#ad5867"/><rect x="60" y="55" width="5" height="5" fill="#de5f96"/><rect x="65" y="55" width="5" height="5" fill="#e07a96"/><rect x="70" y="55" width="5" height="5" fill="#dd827b"/><rect x="75" y="55" width="15" height="5" fill="#dca079"/><rect x="5" y="60" width="5" height="5" fill="#e6a1a3"/><rect x="10" y="60" width="5" height="5" fill="#f29ac5"/><rect x="15" y="60" width="5" height="5" fill="#dd8aa5"/><rect x="20" y="60" width="5" height="5" fill="#d86a87"/><rect x="25" y="60" width="5" height="5" fill="#b04a5f"/><rect x="30" y="60" width="5" height="5" fill="#9c5a57"/><rect x="35" y="60" width="5" height="5" fill="#702d2c"/><rect x="40" y="60" width="5" height="5" fill="#7e3b3e"/><rect x="45" y="60" width="5" height="5" fill="#e87fb0"/><rect x="50" y="60" width="5" height="5" fill="#c4627f"/><rect x="55" y="60" width="5" height="5" fill="#e590ae"/><rect x="60" y="60" width="5" height="5" fill="#d48f99"/><rect x="65" y="60" width="5" height="5" fill="#d68b90"/><rect x="70" y="60" width="5" height="5" fill="#dc7a90"/><rect x="75" y="60" width="5" height="5" fill="#e2a285"/><rect x="80" y="60" width="10" height="5" fill="#dca079"/><rect x="5" y="65" width="5" height="5" fill="#e6ac92"/><rect x="10" y="65" width="5" height="5" fill="#e8acab"/><rect x="15" y="65" width="5" height="5" fill="#ee8cb1"/><rect x="20" y="65" width="5" height="5" fill="#c9657a"/><rect x="25" y="65" width="5" height="5" fill="#8e3a4e"/><rect x="30" y="65" width="5" height="5" fill="#a84668"/><rect x="35" y="65" width="5" height="5" fill="#8f2f4a"/><rect x="40" y="65" width="5" height="5" fill="#a2606c"/><rect x="45" y="65" width="5" height="5" fill="#e27bab"/><rect x="50" y="65" width="5" height="5" fill="#b85a76"/><rect x="55" y="65" width="5" height="5" fill="#c38593"/><rect x="60" y="65" width="5" height="5" fill="#ccad97"/><rect x="65" y="65" width="5" height="5" fill="#c9ae97"/><rect x="70" y="65" width="5" height="5" fill="#dab2a2"/><rect x="75" y="65" width="5" height="5" fill="#e3949a"/><rect x="80" y="65" width="5" height="5" fill="#dc9f79"/><rect x="85" y="65" width="5" height="5" fill="#dca079"/><rect x="5" y="70" width="5" height="5" fill="#e6a796"/><rect x="10" y="70" width="5" height="5" fill="#e2a6b3"/><rect x="15" y="70" width="5" height="5" fill="#ee8fb1"/><rect x="20" y="70" width="5" height="5" fill="#e2558a"/><rect x="25" y="70" width="5" height="5" fill="#ad4056"/><rect x="30" y="70" width="5" height="5" fill="#86304a"/><rect x="35" y="70" width="5" height="5" fill="#8f3a4a"/><rect x="40" y="70" width="5" height="5" fill="#985074"/><rect x="45" y="70" width="5" height="5" fill="#974a70"/><rect x="50" y="70" width="5" height="5" fill="#cf7480"/><rect x="55" y="70" width="5" height="5" fill="#c27890"/><rect x="60" y="70" width="5" height="5" fill="#d5a89b"/><rect x="65" y="70" width="5" height="5" fill="#dbb9ab"/><rect x="70" y="70" width="5" height="5" fill="#e5c3b4"/><rect x="75" y="70" width="5" height="5" fill="#e3bca7"/><rect x="80" y="70" width="5" height="5" fill="#d9a086"/><rect x="85" y="70" width="5" height="5" fill="#d99c73"/><rect x="5" y="75" width="5" height="5" fill="#e5a09c"/><rect x="10" y="75" width="5" height="5" fill="#dea6a6"/><rect x="15" y="75" width="5" height="5" fill="#cba095"/><rect x="20" y="75" width="5" height="5" fill="#d2848a"/><rect x="25" y="75" width="5" height="5" fill="#b66173"/><rect x="30" y="75" width="5" height="5" fill="#8f5060"/><rect x="35" y="75" width="5" height="5" fill="#9f6264"/><rect x="40" y="75" width="5" height="5" fill="#9e606c"/><rect x="45" y="75" width="5" height="5" fill="#a76272"/><rect x="50" y="75" width="5" height="5" fill="#d6859a"/><rect x="55" y="75" width="5" height="5" fill="#cf9996"/><rect x="60" y="75" width="5" height="5" fill="#cda098"/><rect x="65" y="75" width="5" height="5" fill="#ddb4a6"/><rect x="70" y="75" width="5" height="5" fill="#dcb2a4"/><rect x="75" y="75" width="5" height="5" fill="#bd897c"/><rect x="80" y="75" width="5" height="5" fill="#b07b6c"/><rect x="85" y="75" width="5" height="5" fill="#cd8f6b"/><rect x="5" y="80" width="5" height="5" fill="#e29c84"/><rect x="10" y="80" width="5" height="5" fill="#c9a098"/><rect x="15" y="80" width="5" height="5" fill="#a99896"/><rect x="20" y="80" width="5" height="5" fill="#a98e8b"/><rect x="25" y="80" width="5" height="5" fill="#a98c88"/><rect x="30" y="80" width="5" height="5" fill="#a58884"/><rect x="35" y="80" width="5" height="5" fill="#a3857f"/><rect x="40" y="80" width="5" height="5" fill="#9c7b7b"/><rect x="45" y="80" width="5" height="5" fill="#a17c77"/><rect x="50" y="80" width="5" height="5" fill="#906766"/><rect x="55" y="80" width="5" height="5" fill="#7e5a56"/><rect x="60" y="80" width="5" height="5" fill="#825a52"/><rect x="65" y="80" width="5" height="5" fill="#8f6c66"/><rect x="70" y="80" width="5" height="5" fill="#a8877f"/><rect x="75" y="80" width="5" height="5" fill="#a98982"/><rect x="80" y="80" width="5" height="5" fill="#a7827c"/><rect x="85" y="80" width="5" height="5" fill="#bf8566"/><rect x="5" y="85" width="5" height="5" fill="#c18c72"/><rect x="10" y="85" width="5" height="5" fill="#bc8e8a"/><rect x="15" y="85" width="5" height="5" fill="#a58c8c"/><rect x="20" y="85" width="5" height="5" fill="#8c7a80"/><rect x="25" y="85" width="5" height="5" fill="#8f6866"/><rect x="30" y="85" width="5" height="5" fill="#966c68"/><rect x="35" y="85" width="5" height="5" fill="#805a55"/><rect x="40" y="85" width="5" height="5" fill="#74504c"/><rect x="45" y="85" width="5" height="5" fill="#5e4040"/><rect x="50" y="85" width="5" height="5" fill="#7a545a"/><rect x="55" y="85" width="5" height="5" fill="#a8787c"/><rect x="60" y="85" width="5" height="5" fill="#ac8d84"/><rect x="65" y="85" width="5" height="5" fill="#a08480"/><rect x="70" y="85" width="5" height="5" fill="#967872"/><rect x="75" y="85" width="5" height="5" fill="#98766f"/><rect x="80" y="85" width="5" height="5" fill="#8a6862"/><rect x="85" y="85" width="5" height="5" fill="#85635a"/></svg><!--/PHOTO-->
  <!--BLUR--><svg class="abs" style="left:242px;top:0" width="460" height="100" viewBox="250 205 460 100" shape-rendering="crispEdges"><rect x="258" y="206" width="5" height="5" fill="#e6ebf2"/><rect x="263" y="206" width="5" height="5" fill="#e6ebf2"/><rect x="308" y="206" width="5" height="5" fill="#e5e8ec"/><rect x="313" y="206" width="5" height="5" fill="#e5e8ec"/><rect x="318" y="206" width="5" height="5" fill="#eaf0f8"/><rect x="258" y="211" width="5" height="5" fill="#8f8382"/><rect x="263" y="211" width="5" height="5" fill="#9a9ba1"/><rect x="268" y="211" width="5" height="5" fill="#9a9fa6"/><rect x="273" y="211" width="5" height="5" fill="#a3a3a7"/><rect x="278" y="211" width="5" height="5" fill="#a09e9c"/><rect x="283" y="211" width="5" height="5" fill="#9e9c9a"/><rect x="288" y="211" width="5" height="5" fill="#a3a7ad"/><rect x="293" y="211" width="5" height="5" fill="#a2a7a8"/><rect x="298" y="211" width="5" height="5" fill="#a4a7aa"/><rect x="308" y="211" width="5" height="5" fill="#9c9e9c"/><rect x="313" y="211" width="5" height="5" fill="#b5ae9c"/><rect x="318" y="211" width="5" height="5" fill="#b7d3ec"/><rect x="258" y="216" width="5" height="5" fill="#c9c9d0"/><rect x="263" y="216" width="5" height="5" fill="#d4d2d2"/><rect x="268" y="216" width="5" height="5" fill="#94a0a8"/><rect x="273" y="216" width="5" height="5" fill="#cacbd0"/><rect x="278" y="216" width="5" height="5" fill="#c6c9c8"/><rect x="283" y="216" width="5" height="5" fill="#c8c6c0"/><rect x="288" y="216" width="5" height="5" fill="#9ba1ad"/><rect x="293" y="216" width="5" height="5" fill="#b4b9c0"/><rect x="298" y="216" width="5" height="5" fill="#c6c0b8"/><rect x="303" y="216" width="5" height="5" fill="#cfdde9"/><rect x="308" y="216" width="5" height="5" fill="#a5a8ab"/><rect x="313" y="216" width="5" height="5" fill="#b8b4ae"/><rect x="318" y="216" width="5" height="5" fill="#e0ecf6"/><rect x="258" y="231" width="5" height="5" fill="#cac6c6"/><rect x="263" y="231" width="5" height="5" fill="#a9adb5"/><rect x="268" y="231" width="5" height="5" fill="#c0c4cc"/><rect x="273" y="231" width="5" height="5" fill="#f3f1ea"/><rect x="278" y="231" width="5" height="5" fill="#c3cad5"/><rect x="283" y="231" width="5" height="5" fill="#a9a8a6"/><rect x="288" y="231" width="5" height="5" fill="#dbe3ec"/><rect x="293" y="231" width="5" height="5" fill="#eef1f5"/><rect x="298" y="231" width="5" height="5" fill="#eceef1"/><rect x="303" y="231" width="5" height="5" fill="#eff1f4"/><rect x="308" y="231" width="5" height="5" fill="#eff0f2"/><rect x="313" y="231" width="5" height="5" fill="#ebe5da"/><rect x="318" y="231" width="5" height="5" fill="#dce6f1"/><rect x="323" y="231" width="5" height="5" fill="#eff3f9"/><rect x="338" y="231" width="5" height="5" fill="#dcdad6"/><rect x="343" y="231" width="5" height="5" fill="#b4b7be"/><rect x="348" y="231" width="5" height="5" fill="#c6c2ba"/><rect x="353" y="231" width="5" height="5" fill="#d6e2ee"/><rect x="358" y="231" width="5" height="5" fill="#f0f2f6"/><rect x="363" y="231" width="5" height="5" fill="#f1f3f7"/><rect x="368" y="231" width="5" height="5" fill="#a3a2a4"/><rect x="373" y="231" width="5" height="5" fill="#eaeae8"/><rect x="378" y="231" width="5" height="5" fill="#d9e3ee"/><rect x="383" y="231" width="5" height="5" fill="#eef2f7"/><rect x="388" y="231" width="5" height="5" fill="#e9e6e0"/><rect x="393" y="231" width="5" height="5" fill="#d3dbe6"/><rect x="258" y="236" width="5" height="5" fill="#c4bcbc"/><rect x="263" y="236" width="5" height="5" fill="#a1a5a6"/><rect x="268" y="236" width="5" height="5" fill="#a4a8b6"/><rect x="273" y="236" width="5" height="5" fill="#c4bebc"/><rect x="278" y="236" width="5" height="5" fill="#e6f1fb"/><rect x="283" y="236" width="5" height="5" fill="#828588"/><rect x="288" y="236" width="5" height="5" fill="#85878a"/><rect x="293" y="236" width="5" height="5" fill="#8a8886"/><rect x="298" y="236" width="5" height="5" fill="#7b767c"/><rect x="303" y="236" width="5" height="5" fill="#757a8a"/><rect x="308" y="236" width="5" height="5" fill="#8f9296"/><rect x="313" y="236" width="5" height="5" fill="#857a70"/><rect x="318" y="236" width="5" height="5" fill="#6f7a84"/><rect x="323" y="236" width="5" height="5" fill="#8e98a8"/><rect x="338" y="236" width="5" height="5" fill="#b9b7b5"/><rect x="343" y="236" width="5" height="5" fill="#b0afaf"/><rect x="348" y="236" width="5" height="5" fill="#9c9482"/><rect x="353" y="236" width="5" height="5" fill="#80848e"/><rect x="358" y="236" width="5" height="5" fill="#7e8288"/><rect x="363" y="236" width="5" height="5" fill="#929290"/><rect x="368" y="236" width="5" height="5" fill="#888a94"/><rect x="373" y="236" width="5" height="5" fill="#9a9c94"/><rect x="378" y="236" width="5" height="5" fill="#68748a"/><rect x="383" y="236" width="5" height="5" fill="#8e9698"/><rect x="388" y="236" width="5" height="5" fill="#9a9ea0"/><rect x="393" y="236" width="5" height="5" fill="#b0b6c0"/><rect x="258" y="241" width="5" height="5" fill="#d3d3d6"/><rect x="263" y="241" width="5" height="5" fill="#d0d2d8"/><rect x="268" y="241" width="5" height="5" fill="#cbd0da"/><rect x="273" y="241" width="5" height="5" fill="#d6d8dc"/><rect x="283" y="241" width="5" height="5" fill="#e6e8ec"/><rect x="288" y="241" width="5" height="5" fill="#e8e8e8"/><rect x="293" y="241" width="5" height="5" fill="#d4d8dc"/><rect x="298" y="241" width="5" height="5" fill="#e2e4e8"/><rect x="303" y="241" width="5" height="5" fill="#e0e2ea"/><rect x="308" y="241" width="5" height="5" fill="#d4d8dc"/><rect x="313" y="241" width="5" height="5" fill="#d6d9de"/><rect x="318" y="241" width="5" height="5" fill="#d8dce4"/><rect x="323" y="241" width="5" height="5" fill="#d6dce6"/><rect x="338" y="241" width="5" height="5" fill="#dad6d4"/><rect x="343" y="241" width="5" height="5" fill="#cdd3d8"/><rect x="348" y="241" width="5" height="5" fill="#d6d8da"/><rect x="353" y="241" width="5" height="5" fill="#e0e4e8"/><rect x="358" y="241" width="5" height="5" fill="#dadce0"/><rect x="363" y="241" width="5" height="5" fill="#c0c2cc"/><rect x="368" y="241" width="5" height="5" fill="#e8eaee"/><rect x="373" y="241" width="5" height="5" fill="#eef0f4"/><rect x="378" y="241" width="5" height="5" fill="#dcdee4"/><rect x="383" y="241" width="5" height="5" fill="#d2d8e0"/><rect x="388" y="241" width="5" height="5" fill="#e4e2dc"/><rect x="393" y="241" width="5" height="5" fill="#cdd3e0"/><rect x="448" y="226" width="5" height="5" fill="#ebf1f9"/><rect x="443" y="231" width="5" height="5" fill="#dce9f5"/><rect x="448" y="231" width="5" height="5" fill="#bcd6ee"/><rect x="438" y="236" width="5" height="5" fill="#dbe8f5"/><rect x="443" y="236" width="5" height="5" fill="#3a8ed4"/><rect x="448" y="236" width="5" height="5" fill="#3a8ed4"/><rect x="453" y="236" width="5" height="5" fill="#bcd9f0"/><rect x="438" y="241" width="5" height="5" fill="#eaf2fa"/><rect x="443" y="241" width="5" height="5" fill="#3a8ed4"/><rect x="448" y="241" width="5" height="5" fill="#3a8ed4"/><rect x="453" y="241" width="5" height="5" fill="#d0e3f3"/><rect x="483" y="231" width="5" height="5" fill="#e8eaee"/><rect x="503" y="231" width="5" height="5" fill="#eceef2"/><rect x="463" y="236" width="5" height="5" fill="#c4bcbc"/><rect x="468" y="236" width="5" height="5" fill="#9a9da4"/><rect x="473" y="236" width="5" height="5" fill="#8f8580"/><rect x="478" y="236" width="5" height="5" fill="#a9aeb0"/><rect x="483" y="236" width="5" height="5" fill="#7f8288"/><rect x="488" y="236" width="5" height="5" fill="#a0a3a4"/><rect x="493" y="236" width="5" height="5" fill="#7f736c"/><rect x="498" y="236" width="5" height="5" fill="#b0b4be"/><rect x="503" y="236" width="5" height="5" fill="#7c8894"/><rect x="508" y="236" width="5" height="5" fill="#9a9c98"/><rect x="513" y="236" width="5" height="5" fill="#8a8484"/><rect x="518" y="236" width="5" height="5" fill="#7e848c"/><rect x="523" y="236" width="5" height="5" fill="#a8a09c"/><rect x="528" y="236" width="5" height="5" fill="#b0b6c2"/><rect x="463" y="241" width="5" height="5" fill="#c0bbbb"/><rect x="468" y="241" width="5" height="5" fill="#a0a3a8"/><rect x="473" y="241" width="5" height="5" fill="#989490"/><rect x="478" y="241" width="5" height="5" fill="#7c8090"/><rect x="483" y="241" width="5" height="5" fill="#a8aaa8"/><rect x="488" y="241" width="5" height="5" fill="#a0a2a2"/><rect x="493" y="241" width="5" height="5" fill="#8c8688"/><rect x="498" y="241" width="5" height="5" fill="#8490a8"/><rect x="503" y="241" width="5" height="5" fill="#c0c2c0"/><rect x="508" y="241" width="5" height="5" fill="#a8aaa6"/><rect x="513" y="241" width="5" height="5" fill="#a4a4a8"/><rect x="518" y="241" width="5" height="5" fill="#808890"/><rect x="523" y="241" width="5" height="5" fill="#aca6a2"/><rect x="528" y="241" width="5" height="5" fill="#b4b8c4"/><rect x="478" y="246" width="5" height="5" fill="#eef0f4"/><rect x="498" y="246" width="5" height="5" fill="#eef0f4"/><rect x="563" y="236" width="5" height="5" fill="#d0ccc4"/><rect x="568" y="236" width="5" height="5" fill="#b8a6b4"/><rect x="573" y="236" width="5" height="5" fill="#b4bcc8"/><rect x="563" y="241" width="5" height="5" fill="#d8d8d0"/><rect x="568" y="241" width="5" height="5" fill="#c4b4c0"/><rect x="573" y="241" width="5" height="5" fill="#c0c8d0"/><rect x="628" y="236" width="5" height="5" fill="#ece4da"/><rect x="633" y="236" width="5" height="5" fill="#7c7c80"/><rect x="638" y="236" width="5" height="5" fill="#a8b0b4"/><rect x="643" y="236" width="5" height="5" fill="#9c9c9e"/><rect x="648" y="236" width="5" height="5" fill="#9a9ca2"/><rect x="633" y="241" width="5" height="5" fill="#b0b0b4"/><rect x="638" y="241" width="5" height="5" fill="#a8948c"/><rect x="643" y="241" width="5" height="5" fill="#a0a0a2"/><rect x="648" y="241" width="5" height="5" fill="#8c94a4"/><rect x="258" y="256" width="5" height="5" fill="#e6e8ea"/><rect x="263" y="256" width="5" height="5" fill="#e2e2e2"/><rect x="268" y="256" width="5" height="5" fill="#dadce4"/><rect x="273" y="256" width="5" height="5" fill="#eef2f8"/><rect x="278" y="256" width="5" height="5" fill="#eef2f8"/><rect x="283" y="256" width="5" height="5" fill="#eef2f8"/><rect x="288" y="256" width="5" height="5" fill="#eef2f8"/><rect x="293" y="256" width="5" height="5" fill="#eef2f8"/><rect x="298" y="256" width="5" height="5" fill="#eef2f8"/><rect x="303" y="256" width="5" height="5" fill="#eef2f8"/><rect x="308" y="256" width="5" height="5" fill="#eef2f8"/><rect x="313" y="256" width="5" height="5" fill="#eef2f8"/><rect x="318" y="256" width="5" height="5" fill="#eef2f8"/><rect x="323" y="256" width="5" height="5" fill="#eef2f8"/><rect x="328" y="256" width="5" height="5" fill="#eef2f8"/><rect x="333" y="256" width="5" height="5" fill="#eef2f8"/><rect x="338" y="256" width="5" height="5" fill="#eef2f8"/><rect x="343" y="256" width="5" height="5" fill="#eef2f8"/><rect x="348" y="256" width="5" height="5" fill="#eef2f8"/><rect x="353" y="256" width="5" height="5" fill="#eef2f8"/><rect x="258" y="261" width="5" height="5" fill="#cfcbcc"/><rect x="263" y="261" width="5" height="5" fill="#c6c8ca"/><rect x="268" y="261" width="5" height="5" fill="#eee4d4"/><rect x="273" y="261" width="5" height="5" fill="#c8e0f4"/><rect x="278" y="261" width="5" height="5" fill="#bcc4da"/><rect x="283" y="261" width="5" height="5" fill="#8eb2d6"/><rect x="288" y="261" width="5" height="5" fill="#a5c0dc"/><rect x="293" y="261" width="5" height="5" fill="#a8c0dc"/><rect x="298" y="261" width="5" height="5" fill="#b0bcd8"/><rect x="303" y="261" width="5" height="5" fill="#90b6d8"/><rect x="308" y="261" width="5" height="5" fill="#8ea6d0"/><rect x="313" y="261" width="5" height="5" fill="#80a4d0"/><rect x="318" y="261" width="5" height="5" fill="#88acd6"/><rect x="323" y="261" width="5" height="5" fill="#dce0ea"/><rect x="328" y="261" width="5" height="5" fill="#98b2d6"/><rect x="333" y="261" width="5" height="5" fill="#9ab6da"/><rect x="338" y="261" width="5" height="5" fill="#a0aed0"/><rect x="343" y="261" width="5" height="5" fill="#a0b8da"/><rect x="348" y="261" width="5" height="5" fill="#84a8d2"/><rect x="353" y="261" width="5" height="5" fill="#90b2d8"/><rect x="258" y="266" width="5" height="5" fill="#d0ced0"/><rect x="263" y="266" width="5" height="5" fill="#cccccc"/><rect x="268" y="266" width="5" height="5" fill="#d6ccc8"/><rect x="273" y="266" width="5" height="5" fill="#d6e8f6"/><rect x="278" y="266" width="5" height="5" fill="#a8c0de"/><rect x="283" y="266" width="5" height="5" fill="#c6d4e6"/><rect x="288" y="266" width="5" height="5" fill="#c4d4e6"/><rect x="293" y="266" width="5" height="5" fill="#d0d8e8"/><rect x="298" y="266" width="5" height="5" fill="#dcdeea"/><rect x="303" y="266" width="5" height="5" fill="#b4cce2"/><rect x="308" y="266" width="5" height="5" fill="#b8cce4"/><rect x="313" y="266" width="5" height="5" fill="#c0d0e6"/><rect x="318" y="266" width="5" height="5" fill="#bcd0e6"/><rect x="323" y="266" width="5" height="5" fill="#eceef2"/><rect x="328" y="266" width="5" height="5" fill="#a8bcda"/><rect x="333" y="266" width="5" height="5" fill="#dce4ee"/><rect x="338" y="266" width="5" height="5" fill="#d8e4f0"/><rect x="343" y="266" width="5" height="5" fill="#a8c0dc"/><rect x="348" y="266" width="5" height="5" fill="#c8d8e8"/><rect x="353" y="266" width="5" height="5" fill="#c8d6e8"/><rect x="258" y="271" width="5" height="5" fill="#eceef0"/><rect x="268" y="271" width="5" height="5" fill="#eef0f2"/><rect x="563" y="256" width="5" height="5" fill="#eef0f0"/><rect x="568" y="256" width="5" height="5" fill="#dcdee8"/><rect x="573" y="256" width="5" height="5" fill="#e0e6e8"/><rect x="593" y="256" width="5" height="5" fill="#eef0f6"/><rect x="563" y="261" width="5" height="5" fill="#bcbec8"/><rect x="568" y="261" width="5" height="5" fill="#eef0f4"/><rect x="573" y="261" width="5" height="5" fill="#9ea8a6"/><rect x="578" y="261" width="5" height="5" fill="#c4c2b8"/><rect x="583" y="261" width="5" height="5" fill="#a4a8b4"/><rect x="588" y="261" width="5" height="5" fill="#b4bcbc"/><rect x="593" y="261" width="5" height="5" fill="#9cb0bc"/><rect x="563" y="266" width="5" height="5" fill="#d8d4dc"/><rect x="568" y="266" width="5" height="5" fill="#ccd2dc"/><rect x="573" y="266" width="5" height="5" fill="#d8e2e4"/><rect x="578" y="266" width="5" height="5" fill="#c6c8bc"/><rect x="583" y="266" width="5" height="5" fill="#c4ccd0"/><rect x="588" y="266" width="5" height="5" fill="#d6e0e0"/><rect x="593" y="266" width="5" height="5" fill="#ccccd8"/><rect x="258" y="281" width="5" height="5" fill="#9cc8ec"/><rect x="263" y="281" width="5" height="5" fill="#5aa4de"/><rect x="268" y="281" width="5" height="5" fill="#9cc8ec"/><rect x="258" y="286" width="5" height="5" fill="#5aa4de"/><rect x="263" y="286" width="5" height="5" fill="#2a86d4"/><rect x="268" y="286" width="5" height="5" fill="#5aa4de"/><rect x="258" y="291" width="5" height="5" fill="#b8d8f2"/><rect x="263" y="291" width="5" height="5" fill="#8cc0ea"/><rect x="268" y="291" width="5" height="5" fill="#b8d8f2"/><rect x="278" y="281" width="5" height="5" fill="#e4eaf2"/><rect x="283" y="281" width="5" height="5" fill="#ccd8ea"/><rect x="323" y="281" width="5" height="5" fill="#dce2ee"/><rect x="328" y="281" width="5" height="5" fill="#d4e0ee"/><rect x="343" y="281" width="5" height="5" fill="#dee6f0"/><rect x="368" y="281" width="5" height="5" fill="#eef0f8"/><rect x="373" y="281" width="5" height="5" fill="#eef0f8"/><rect x="378" y="281" width="5" height="5" fill="#dee2f0"/><rect x="383" y="281" width="5" height="5" fill="#dee2f0"/><rect x="278" y="286" width="5" height="5" fill="#c4cee0"/><rect x="283" y="286" width="5" height="5" fill="#90a8d0"/><rect x="288" y="286" width="5" height="5" fill="#8eacd4"/><rect x="293" y="286" width="5" height="5" fill="#a4b8d8"/><rect x="298" y="286" width="5" height="5" fill="#a8bcda"/><rect x="303" y="286" width="5" height="5" fill="#a0b8d8"/><rect x="308" y="286" width="5" height="5" fill="#a4b8d8"/><rect x="313" y="286" width="5" height="5" fill="#98b4d8"/><rect x="318" y="286" width="5" height="5" fill="#a4b4d4"/><rect x="323" y="286" width="5" height="5" fill="#90acd2"/><rect x="328" y="286" width="5" height="5" fill="#94b0d4"/><rect x="333" y="286" width="5" height="5" fill="#98b4d6"/><rect x="338" y="286" width="5" height="5" fill="#a8c4dc"/><rect x="343" y="286" width="5" height="5" fill="#a0b4d6"/><rect x="348" y="286" width="5" height="5" fill="#94b0d8"/><rect x="353" y="286" width="5" height="5" fill="#a0b4d6"/><rect x="358" y="286" width="5" height="5" fill="#a0b0d4"/><rect x="363" y="286" width="5" height="5" fill="#9cb4d6"/><rect x="368" y="286" width="5" height="5" fill="#9cb0d4"/><rect x="373" y="286" width="5" height="5" fill="#a8b8d8"/><rect x="378" y="286" width="5" height="5" fill="#8ca8d4"/><rect x="383" y="286" width="5" height="5" fill="#98b0d6"/><rect x="388" y="286" width="5" height="5" fill="#9cb0d4"/><rect x="393" y="286" width="5" height="5" fill="#dce4ee"/><rect x="398" y="286" width="5" height="5" fill="#a0bcdc"/><rect x="403" y="286" width="5" height="5" fill="#a8bcdc"/><rect x="408" y="286" width="5" height="5" fill="#a8b4d4"/><rect x="413" y="286" width="5" height="5" fill="#90b0d6"/><rect x="418" y="286" width="5" height="5" fill="#9cb4d8"/><rect x="278" y="291" width="5" height="5" fill="#b4c8e2"/><rect x="283" y="291" width="5" height="5" fill="#dce0ec"/><rect x="288" y="291" width="5" height="5" fill="#b4cce4"/><rect x="293" y="291" width="5" height="5" fill="#dce6f0"/><rect x="298" y="291" width="5" height="5" fill="#dee8f0"/><rect x="303" y="291" width="5" height="5" fill="#dee6f0"/><rect x="308" y="291" width="5" height="5" fill="#d0d8e8"/><rect x="313" y="291" width="5" height="5" fill="#c4d4e8"/><rect x="318" y="291" width="5" height="5" fill="#dce4f0"/><rect x="323" y="291" width="5" height="5" fill="#a0b4d6"/><rect x="328" y="291" width="5" height="5" fill="#9cb4d6"/><rect x="333" y="291" width="5" height="5" fill="#acc0dc"/><rect x="338" y="291" width="5" height="5" fill="#c4d4e6"/><rect x="343" y="291" width="5" height="5" fill="#c8d4e8"/><rect x="348" y="291" width="5" height="5" fill="#c0d0e6"/><rect x="353" y="291" width="5" height="5" fill="#dce4ee"/><rect x="358" y="291" width="5" height="5" fill="#ccd6e8"/><rect x="363" y="291" width="5" height="5" fill="#c8d8ea"/><rect x="368" y="291" width="5" height="5" fill="#d0dcea"/><rect x="373" y="291" width="5" height="5" fill="#c0cee4"/><rect x="378" y="291" width="5" height="5" fill="#c8d4e8"/><rect x="383" y="291" width="5" height="5" fill="#b0c8e2"/><rect x="388" y="291" width="5" height="5" fill="#ccd8ea"/><rect x="393" y="291" width="5" height="5" fill="#d4deec"/><rect x="398" y="291" width="5" height="5" fill="#bccce4"/><rect x="403" y="291" width="5" height="5" fill="#ccd6ea"/><rect x="408" y="291" width="5" height="5" fill="#d0daea"/><rect x="413" y="291" width="5" height="5" fill="#d8e0ee"/><rect x="418" y="291" width="5" height="5" fill="#dae2ee"/><rect x="428" y="281" width="5" height="5" fill="#9ccb9c"/><rect x="433" y="281" width="5" height="5" fill="#2f8f2f"/><rect x="438" y="281" width="5" height="5" fill="#7cbc7c"/><rect x="428" y="286" width="5" height="5" fill="#4aa44a"/><rect x="433" y="286" width="5" height="5" fill="#5cac5c"/><rect x="438" y="286" width="5" height="5" fill="#2f8f2f"/><rect x="428" y="291" width="5" height="5" fill="#d4e8d8"/><rect x="433" y="291" width="5" height="5" fill="#7cbc7c"/><rect x="438" y="291" width="5" height="5" fill="#c0dcc4"/></svg><!--/BLUR-->
  <div class="abs lo" style="left:726px;top:5px;letter-spacing:0.71px">Linked Ortho</div><div class="abs lo" style="left:726px;top:28px;letter-spacing:0.46px">Next Visit</div><div class="abs lo" style="left:726px;top:52px;letter-spacing:0.36px">Next Recall</div><div class="abs lo" style="left:726px;top:76px;letter-spacing:0.35px">Last Visit</div>
  <div class="abs lo lk" style="left:830px;top:5px;letter-spacing:0.55px">786</div><div class="abs lo b" style="left:830px;top:28px;letter-spacing:0.15px">06/12/2023</div><div class="abs lo b" style="left:830px;top:52px;letter-spacing:0.15px">08/12/2023</div><div class="abs lo b" style="left:829px;top:76px;letter-spacing:0.47px">06/06/2023</div>
 </div>
 <div class="row o u" style="top:101px;height:25px"><div class="c first" style="left:0;width:235px;letter-spacing:0.45px">Provider</div><div class="c b" style="left:235px;width:235px;letter-spacing:0.43px">Jones, William DDS</div><div class="c" style="left:470px;width:235px;letter-spacing:0.31px">Referral Type</div><div class="c b" style="left:705px;width:237px;letter-spacing:0.58px">Referral from outside Dr</div></div>
 <div class="row e" style="top:125px;height:26px"><div class="c first" style="left:0;width:235px;letter-spacing:0.54px">Hygienist</div><div class="c b" style="left:235px;width:235px;letter-spacing:0.35px">Campos, Laura RDH</div><div class="c lk" style="left:470px;width:235px;letter-spacing:0.45px">Referred By</div><div class="c b" style="left:705px;width:237px;letter-spacing:0.34px">Zayne Jones</div></div>
 <div class="row o" style="top:150px;height:26px"><div class="c first" style="left:0;width:235px;letter-spacing:0.68px">Home Office</div><div class="c b" style="left:235px;width:235px;letter-spacing:0.70px">Organic Dentistry</div><div class="c lk" style="left:470px;width:235px;letter-spacing:0.37px">Referred To</div><div class="c b" style="left:705px;width:237px;letter-spacing:0.28px">Trevor Jones</div></div>
 <div class="row e u" style="top:175px;height:26px"><div class="c first" style="left:0;width:235px;letter-spacing:0.33px">First Visit</div><div class="c b" style="left:235px;width:235px;letter-spacing:-0.06px">02/11/2023</div><div class="c" style="left:470px;width:235px;letter-spacing:0.37px">Last Perio Chart</div><div class="c b" style="left:705px;width:237px"></div></div>
 <div class="row o u" style="top:200px;height:25px"><div class="c first" style="left:0;width:235px;letter-spacing:0.75px">Home</div><div class="c b" style="left:235px;width:235px"></div><div class="c" style="left:470px;width:235px;letter-spacing:0.52px">Contact Pref</div><div class="c b" style="left:705px;width:237px"></div></div>
 <div class="row e" style="top:224px;height:26px"><div class="c first" style="left:0;width:235px;letter-spacing:0.70px">Work</div><div class="c b" style="left:235px;width:235px;letter-spacing:0.33px">800-435-3367 3429</div><div class="c" style="left:470px;width:235px;letter-spacing:0.36px">Fee Schedule</div><div class="c b" style="left:705px;width:237px;letter-spacing:-0.24px">UCR 2019</div></div>
 <div class="row o" style="top:249px;height:46px"><div class="c first" style="left:0;width:235px;letter-spacing:0.40px">Address</div><div class="c b" style="left:235px;width:235px;letter-spacing:0.09px">123 Beach Ave</div><div class="c" style="left:470px;width:235px;letter-spacing:0.27px">Type</div><div class="c b" style="left:705px;width:237px"></div></div>
 <div class="row e" style="top:294px;height:26px"><div class="c first" style="left:0;width:235px;letter-spacing:0.40px">City, State and Zip</div><div class="c b" style="left:235px;width:235px;letter-spacing:0.46px">Long Beach, CA 90808</div><div class="c" style="left:470px;width:235px;letter-spacing:0.56px">Preferred Language</div><div class="c b" style="left:705px;width:237px"></div></div>
 <div class="row o" style="top:319px;height:53px"><div class="c first" style="left:0;width:235px;line-height:26px;letter-spacing:0.62px">Patient Note</div><div class="c" style="left:235px;width:707px"></div></div>
 <div class="row e" style="top:371px;height:67px"><div class="c first" style="left:0;width:235px;line-height:15.5px;padding-top:3px"><span style="color:#3a75b8;-webkit-text-stroke:0.42px #3a75b8;font-size:12.2px;letter-spacing:0.55px">Medical Alerts:</span><br><span style="font-size:12.2px;letter-spacing:0.19px">(06/10/2023 09:02 AM PT)</span><br><span style="color:#7a0c0c;-webkit-text-stroke:0.4px #7a0c0c;font-style:italic;font-size:12.2px;letter-spacing:0.65px;position:relative;top:2px">Questionnaire</span></div><div class="c" style="left:235px;width:707px"></div></div>
</div>
<!--/LEFT-->
<!--RIGHT--><style>
.t{position:absolute;font-size:12.2px;color:#2b2b2b;white-space:nowrap;letter-spacing:0.5px}
.t.b{font-weight:normal;-webkit-text-stroke:0.42px currentColor;color:#1d1d1d;letter-spacing:0.5px}
.t.lk{color:#3a72b4}
.t.th{color:#fff;font-weight:bold;letter-spacing:-0.45px;font-size:13px}
.t.s{text-decoration:line-through}
.t.d{letter-spacing:0.3px}
.t.b.d{letter-spacing:0.4px}
.tab{position:absolute;font-size:11.8px;font-weight:normal;-webkit-text-stroke:0.42px currentColor;white-space:nowrap;letter-spacing:-0.15px;color:#1a1a1a}
</style>
<div class="sh" style="left:7.5px;top:178px;letter-spacing:0.47px">PATIENT INFORMATION</div>
<div class="sh" style="left:959px;top:178px;letter-spacing:0.29px">RESPONSIBLE PARTY</div>
<div class="abs" style="left:959px;top:205px;width:942px;height:80px;background:#fff;border:1px solid #d3d9e6;border-radius:4px"></div>
<div class="abs" style="left:960px;top:206px;width:940px;height:24px;background:#f5f9fd;border-radius:3px 3px 0 0"></div>
<div class="abs" style="left:960px;top:231px;width:940px;height:28px;background:#fff;"></div>
<div class="abs" style="left:960px;top:230px;width:940px;height:1px;background:#d3d9e6;"></div>
<div class="abs" style="left:960px;top:260px;width:940px;height:24px;background:#f5f9fd;border-radius:0 0 3px 3px"></div>
<div class="abs" style="left:960px;top:259px;width:940px;height:1px;background:#d3d9e6;"></div>
<div class="abs" style="left:1148px;top:206px;width:1px;height:78px;background:#d3d9e6;"></div>
<div class="abs" style="left:1430px;top:206px;width:1px;height:78px;background:#d3d9e6;"></div>
<div class="abs" style="left:1618px;top:206px;width:1px;height:78px;background:#d3d9e6;"></div>
<div class="t " style="left:974px;top:206px;line-height:24px;letter-spacing:0.75px">Name</div>
<div class="t b" style="left:1162px;top:206px;line-height:24px;letter-spacing:0.29px">Farmer, JJ</div>
<div class="t " style="left:1445px;top:206px;line-height:24px;letter-spacing:0.12px">Cell</div>
<div class="t b" style="left:1632px;top:206px;line-height:24px;letter-spacing:0.22px">251-689-0709</div>
<div class="t " style="left:974px;top:228px;line-height:28px;letter-spacing:0.21px">Resp ID</div>
<div class="t b" style="left:1162px;top:228px;line-height:28px;letter-spacing:0.05px">657</div>
<div class="t " style="left:1445px;top:228px;line-height:28px;letter-spacing:0.50px">Email</div>
<div class="t b" style="left:1632px;top:228px;line-height:28px;letter-spacing:0.69px">jfarmer@planetdds.com</div>
<div class="t " style="left:974px;top:260px;line-height:24px;letter-spacing:0.27px">Type</div>
<div class="t b" style="left:1162px;top:260px;line-height:24px;letter-spacing:0.25px">PPO</div>
<div class="t " style="left:1445px;top:260px;line-height:24px;letter-spacing:0.68px">Home Office</div>
<div class="t b" style="left:1632px;top:260px;line-height:24px;letter-spacing:0.70px">Organic Dentistry</div>
<div class="abs" style="left:959px;top:318px;width:942px;height:1px;background:#dfe4ea;"></div>
<div class="abs" style="left:959px;top:318px;width:140px;height:1px;background:#1a6fc0;"></div>
<div class="tab" style="left:960px;top:297px;color:#1a6fc0;letter-spacing:0.24px">DENTAL INS PRI / SEC</div>
<div class="tab" style="left:1277px;top:297px;letter-spacing:0.24px">MEDICAL INS PRI / SEC</div>
<div class="abs" style="left:959px;top:323px;width:942px;height:173px;background:#fff;border:1px solid #d3d9e6;border-radius:4px"></div>
<div class="abs" style="left:959px;top:323px;width:942px;height:24px;background:#0071c5;border-radius:4px 4px 0 0"></div>
<div class="t th" style="left:1300px;top:323px;line-height:23px;letter-spacing:-0.20px">Primary</div>
<div class="t th" style="left:1656.5px;top:323px;line-height:23px;letter-spacing:-0.33px">Secondary</div>
<div class="abs" style="left:960px;top:347px;width:940px;height:24px;background:#fff;"></div>
<div class="abs" style="left:960px;top:346px;width:940px;height:1px;background:#d3d9e6;"></div>
<div class="abs" style="left:960px;top:372px;width:940px;height:24px;background:#f5f9fd;"></div>
<div class="abs" style="left:960px;top:371px;width:940px;height:1px;background:#d3d9e6;"></div>
<div class="abs" style="left:960px;top:397px;width:940px;height:24px;background:#fff;"></div>
<div class="abs" style="left:960px;top:396px;width:940px;height:1px;background:#d3d9e6;"></div>
<div class="abs" style="left:960px;top:422px;width:940px;height:23px;background:#f5f9fd;"></div>
<div class="abs" style="left:960px;top:421px;width:940px;height:1px;background:#d3d9e6;"></div>
<div class="abs" style="left:960px;top:446px;width:940px;height:24px;background:#fff;"></div>
<div class="abs" style="left:960px;top:445px;width:940px;height:1px;background:#d3d9e6;"></div>
<div class="abs" style="left:960px;top:471px;width:940px;height:24px;background:#f5f9fd;border-radius:0 0 3px 3px"></div>
<div class="abs" style="left:960px;top:470px;width:940px;height:1px;background:#d3d9e6;"></div>
<div class="abs" style="left:1148px;top:348px;width:1px;height:147px;background:#d3d9e6;"></div>
<div class="abs" style="left:1524px;top:348px;width:1px;height:147px;background:#d3d9e6;"></div>
<div class="t " style="left:974px;top:347px;line-height:24px;letter-spacing:0.49px">Carrier Name</div>
<div class="t lk b" style="left:1162px;top:347px;line-height:24px;letter-spacing:0.07px">AETNA INC (KY 14094)</div>
<div class="t lk b" style="left:1538px;top:347px;line-height:24px;letter-spacing:0.48px">State Farmers</div>
<div class="t " style="left:974px;top:372px;line-height:24px;letter-spacing:0.56px">Group #</div>
<div class="t lk b" style="left:1162px;top:372px;line-height:24px;letter-spacing:-0.14px">555652-01</div>
<div class="t lk b" style="left:1538px;top:372px;line-height:24px;letter-spacing:-0.78px">123</div>
<div class="t " style="left:974px;top:396px;line-height:24px;letter-spacing:0.47px">Carrier Phone</div>
<div class="t b" style="left:1162px;top:396px;line-height:24px;letter-spacing:0.38px">877-238-6200</div>
<div class="t b" style="left:1538px;top:396px;line-height:24px;letter-spacing:-0.20px">124-134-3243</div>
<div class="t " style="left:974px;top:422px;line-height:22px;letter-spacing:0.27px">Subscriber (Rel.)</div>
<div class="t b" style="left:1162px;top:422px;line-height:22px;letter-spacing:0.23px">Farmer, JJ (Self)</div>
<div class="t b" style="left:1538px;top:422px;line-height:22px;letter-spacing:0.23px">Farmer, JJ (Self)</div>
<div class="t " style="left:974px;top:446px;line-height:24px;letter-spacing:0.31px">Indi. Max (Rem.)</div>
<div class="t b" style="left:1162px;top:446px;line-height:24px;letter-spacing:0.00px">$1,500.00 ($1,500.00)</div>
<div class="t b" style="left:1538px;top:446px;line-height:24px;letter-spacing:-0.02px">$1,500.00 ($1,930.40)</div>
<div class="t " style="left:974px;top:471px;line-height:24px;letter-spacing:0.28px">Ind. Ded. (Rem.)</div>
<div class="t b" style="left:1162px;top:471px;line-height:24px;letter-spacing:0.30px">$50.00 ($50.00)</div>
<div class="t b" style="left:1538px;top:471px;line-height:24px;letter-spacing:0.30px">$50.00 ($50.00)</div>
<div class="sh" style="left:959px;top:518px;letter-spacing:0.44px">ACCOUNT MEMBERS</div>
<div class="abs" style="left:959px;top:546px;width:942px;height:96px;background:#fff;border:1px solid #d3d9e6;border-radius:4px"></div>
<div class="abs" style="left:959px;top:546px;width:942px;height:23px;background:#0071c5;border-radius:4px 4px 0 0"></div>
<div class="t th" style="left:967px;top:546px;line-height:22px;letter-spacing:0.02px">Member</div>
<div class="t th" style="left:1154.5px;top:546px;line-height:22px;letter-spacing:-0.34px">Age / Sex</div>
<div class="t th" style="left:1287.5px;top:546px;line-height:22px;letter-spacing:-0.35px">Next Visit</div>
<div class="t th" style="left:1419px;top:546px;line-height:22px;letter-spacing:-0.33px">Next Recall</div>
<div class="t th" style="left:1550.5px;top:546px;line-height:22px;letter-spacing:-0.37px">Sched Recall</div>
<div class="t th" style="left:1682.5px;top:546px;line-height:22px;letter-spacing:-0.41px">Last Visit</div>
<div class="t th" style="left:1814.5px;top:546px;line-height:22px;letter-spacing:-0.26px">Active</div>
<div class="abs" style="left:960px;top:570px;width:940px;height:25px;background:#fff;"></div>
<div class="abs" style="left:960px;top:569px;width:940px;height:1px;background:#d3d9e6;"></div>
<div class="abs" style="left:960px;top:596px;width:940px;height:24px;background:#f5f9fd;"></div>
<div class="abs" style="left:960px;top:595px;width:940px;height:1px;background:#d3d9e6;"></div>
<div class="abs" style="left:960px;top:621px;width:940px;height:20px;background:#fff;border-radius:0 0 3px 3px"></div>
<div class="abs" style="left:960px;top:620px;width:940px;height:1px;background:#d3d9e6;"></div>
<div class="abs" style="left:1148px;top:570px;width:1px;height:71px;background:#d3d9e6;"></div>
<div class="abs" style="left:1279px;top:570px;width:1px;height:71px;background:#d3d9e6;"></div>
<div class="abs" style="left:1411px;top:570px;width:1px;height:71px;background:#d3d9e6;"></div>
<div class="abs" style="left:1542px;top:570px;width:1px;height:71px;background:#d3d9e6;"></div>
<div class="abs" style="left:1674px;top:570px;width:1px;height:71px;background:#d3d9e6;"></div>
<div class="abs" style="left:1805px;top:570px;width:1px;height:71px;background:#d3d9e6;"></div>
<div class="t lk" style="left:969px;top:571px;line-height:24px;letter-spacing:0.29px">Farmer, JJ</div>
<div class="t " style="left:1156px;top:571px;line-height:24px;letter-spacing:-0.03px">32 / F</div>
<div class="t " style="left:1288px;top:571px;line-height:24px;letter-spacing:0.15px">06/12/2023</div>
<div class="t " style="left:1420px;top:571px;line-height:24px;letter-spacing:0.20px">08/12/2023</div>
<div class="t " style="left:1551px;top:571px;line-height:24px;">-</div>
<div class="t " style="left:1683px;top:571px;line-height:24px;letter-spacing:0.50px">06/06/2023</div>
<div class="t " style="left:1815px;top:571px;line-height:24px;letter-spacing:-0.30px">Yes</div>
<div class="t lk" style="left:969px;top:596px;line-height:24px;letter-spacing:0.68px">WhiteHart, Mark</div>
<div class="t " style="left:1156px;top:596px;line-height:24px;letter-spacing:0.27px">28 / M</div>
<div class="t " style="left:1288px;top:596px;line-height:24px;letter-spacing:0.15px">06/12/2023</div>
<div class="t " style="left:1420px;top:596px;line-height:24px;letter-spacing:0.15px">12/04/2023</div>
<div class="t " style="left:1551px;top:596px;line-height:24px;">-</div>
<div class="t " style="left:1683px;top:596px;line-height:24px;letter-spacing:0.45px">06/03/2023</div>
<div class="t " style="left:1815px;top:596px;line-height:24px;letter-spacing:-0.30px">Yes</div>
<div class="t lk s" style="left:969px;top:623px;line-height:20px;letter-spacing:0.33px">Farmer, Trey</div>
<div class="t s" style="left:1156px;top:623px;line-height:20px;letter-spacing:-0.49px">11 / M</div>
<div class="t " style="left:1288px;top:623px;line-height:20px;">-</div>
<div class="t s" style="left:1420px;top:623px;line-height:20px;letter-spacing:-0.36px">11/16/2023</div>
<div class="t " style="left:1551px;top:623px;line-height:20px;">-</div>
<div class="t s" style="left:1683px;top:623px;line-height:20px;letter-spacing:0.10px">05/15/2023</div>
<div class="t s" style="left:1815px;top:623px;line-height:20px;letter-spacing:-0.05px">No</div>
<div class="abs" style="left:1891px;top:570px;width:9px;height:71px;background:#b3c8dc;border-radius:3px"></div>
<div class="abs" style="left:959px;top:571px;width:2px;height:24px;background:#1a5fb0;"></div><!--/RIGHT-->
<!--BOTTOM--><div class="abs" style="left:7px;top:675px;width:1894px;height:1px;background:#dfe4ea;"></div>
<div class="abs" style="left:7px;top:675px;width:73px;height:1px;background:#1a6fc0;"></div>
<div class="tab" style="left:8px;top:654px;color:#1a6fc0;font-weight:normal;-webkit-text-stroke:0.25px #1a6fc0;font-size:11.8px;letter-spacing:0.49px">SUMMARY</div>
<div class="tab" style="left:91px;top:654px;color:#1a1a1a;font-weight:normal;-webkit-text-stroke:0.25px #1a1a1a;font-size:11.8px;letter-spacing:0.38px">BALANCES</div>
<div class="tab" style="left:176.5px;top:654px;color:#1a1a1a;font-weight:normal;-webkit-text-stroke:0.25px #1a1a1a;font-size:11.8px;letter-spacing:0.07px">CONTRACTS</div>
<div class="tab" style="left:270.5px;top:654px;color:#1a1a1a;font-weight:normal;-webkit-text-stroke:0.25px #1a1a1a;font-size:11.8px;letter-spacing:0.02px">REFERRALS</div>
<div class="sh" style="left:7px;top:686px;letter-spacing:0.48px">APPOINTMENTS</div>
<div class="abs" style="left:7px;top:713px;width:942px;height:100px;background:#fff;border:1px solid #d3d9e6;border-radius:4px"></div>
<div class="abs" style="left:7px;top:713px;width:942px;height:24px;background:#0071c5;border-radius:4px 4px 0 0"></div>
<div class="t th" style="left:15px;top:713px;line-height:23px;letter-spacing:-0.10px">Appt Date</div>
<div class="t th" style="left:128.5px;top:713px;line-height:23px;letter-spacing:-0.15px">Appt Time</div>
<div class="t th" style="left:252.5px;top:713px;line-height:23px;letter-spacing:-0.14px">Office</div>
<div class="t th" style="left:385.5px;top:713px;line-height:23px;letter-spacing:-0.13px">Operatory</div>
<div class="t th" style="left:500px;top:713px;line-height:23px;letter-spacing:-0.34px">Provider</div>
<div class="t th" style="left:614.5px;top:713px;line-height:23px;letter-spacing:-0.12px">Duration</div>
<div class="t th" style="left:709px;top:713px;line-height:23px;letter-spacing:-0.29px">Status</div>
<div class="t th" style="left:843px;top:713px;line-height:23px;letter-spacing:-0.24px">Last Updated</div>
<div class="abs" style="left:8px;top:737px;width:940px;height:25px;background:#fff;"></div>
<div class="abs" style="left:8px;top:736px;width:940px;height:1px;background:#d3d9e6;"></div>
<div class="abs" style="left:8px;top:763px;width:940px;height:24px;background:#f5f9fd;"></div>
<div class="abs" style="left:8px;top:762px;width:940px;height:1px;background:#d3d9e6;"></div>
<div class="abs" style="left:8px;top:788px;width:940px;height:24px;background:#fff;border-radius:0 0 3px 3px"></div>
<div class="abs" style="left:8px;top:787px;width:940px;height:1px;background:#d3d9e6;"></div>
<div class="abs" style="left:122px;top:738px;width:1px;height:74px;background:#d3d9e6;"></div>
<div class="abs" style="left:245px;top:738px;width:1px;height:74px;background:#d3d9e6;"></div>
<div class="abs" style="left:378px;top:738px;width:1px;height:74px;background:#d3d9e6;"></div>
<div class="abs" style="left:492px;top:738px;width:1px;height:74px;background:#d3d9e6;"></div>
<div class="abs" style="left:606px;top:738px;width:1px;height:74px;background:#d3d9e6;"></div>
<div class="abs" style="left:700px;top:738px;width:1px;height:74px;background:#d3d9e6;"></div>
<div class="abs" style="left:833px;top:738px;width:1px;height:74px;background:#d3d9e6;"></div>
<div class="t lk" style="left:17px;top:738px;line-height:24px;letter-spacing:0.15px">06/12/2023</div>
<div class="t lk" style="left:130.5px;top:738px;line-height:24px;letter-spacing:-0.14px">11:00 AM</div>
<div class="t " style="left:254px;top:738px;line-height:24px;letter-spacing:0.36px">OD</div>
<div class="t " style="left:387px;top:738px;line-height:24px;letter-spacing:0.33px">GP 04</div>
<div class="t " style="left:501px;top:738px;line-height:24px;letter-spacing:0.21px">WJ DDS</div>
<div class="t " style="left:614.5px;top:738px;line-height:24px;letter-spacing:0.47px">60</div>
<div class="t " style="left:709px;top:738px;line-height:24px;letter-spacing:0.65px">Scheduled</div>
<div class="t " style="left:842.5px;top:738px;line-height:24px;letter-spacing:0.20px">_QuickFill_</div>
<div class="t lk" style="left:17px;top:763px;line-height:24px;letter-spacing:0.15px">06/12/2023</div>
<div class="t lk" style="left:130.5px;top:763px;line-height:24px;letter-spacing:0.56px">08:00 AM</div>
<div class="t " style="left:254px;top:763px;line-height:24px;letter-spacing:0.36px">OD</div>
<div class="t " style="left:387px;top:763px;line-height:24px;letter-spacing:-0.62px">TELE</div>
<div class="t " style="left:501px;top:763px;line-height:24px;letter-spacing:-0.05px">JJ DDS</div>
<div class="t " style="left:614.5px;top:763px;line-height:24px;letter-spacing:0.47px">60</div>
<div class="t " style="left:709px;top:763px;line-height:24px;letter-spacing:0.65px">Scheduled</div>
<div class="t " style="left:842.5px;top:763px;line-height:24px;letter-spacing:-0.22px">UITESTING</div>
<div class="t lk" style="left:17px;top:788px;line-height:24px;letter-spacing:0.20px">06/01/2023</div>
<div class="t lk" style="left:130.5px;top:788px;line-height:24px;letter-spacing:0.04px">01:00 PM</div>
<div class="t " style="left:254px;top:788px;line-height:24px;letter-spacing:0.36px">OD</div>
<div class="t " style="left:387px;top:788px;line-height:24px;letter-spacing:0.13px">GP 05</div>
<div class="t " style="left:501px;top:788px;line-height:24px;letter-spacing:0.21px">WJ DDS</div>
<div class="t " style="left:614.5px;top:788px;line-height:24px;letter-spacing:0.47px">60</div>
<div class="t " style="left:709px;top:788px;line-height:24px;letter-spacing:0.65px">Scheduled</div>
<div class="t " style="left:842.5px;top:788px;line-height:24px;letter-spacing:-0.22px">UITESTING</div>
<div class="abs" style="left:939.5px;top:737.5px;width:8.5px;height:75.5px;background:#b3c8dc;border-radius:3px"></div>
<div class="sh" style="left:7px;top:824px;letter-spacing:0.17px">RECALLS</div>
<div class="abs" style="left:7px;top:851px;width:942px;height:98px;background:#fff;border:1px solid #d3d9e6;border-radius:4px"></div>
<div class="abs" style="left:7px;top:851px;width:942px;height:24px;background:#0071c5;border-radius:4px 4px 0 0"></div>
<div class="t th" style="left:15px;top:851px;line-height:23px;letter-spacing:-0.50px">Code</div>
<div class="t th" style="left:127.5px;top:851px;line-height:23px;letter-spacing:-0.16px">Interval</div>
<div class="t th" style="left:250.5px;top:851px;line-height:23px;letter-spacing:-0.24px">Recall Date</div>
<div class="t th" style="left:391.5px;top:851px;line-height:23px;letter-spacing:-0.58px">Reason</div>
<div class="t th" style="left:674px;top:851px;line-height:23px;letter-spacing:-0.27px">Sch Date</div>
<div class="t th" style="left:815px;top:851px;line-height:23px;letter-spacing:-0.32px">Sch Time</div>
<div class="abs" style="left:8px;top:875px;width:940px;height:25px;background:#fff;"></div>
<div class="abs" style="left:8px;top:874px;width:940px;height:1px;background:#d3d9e6;"></div>
<div class="abs" style="left:8px;top:901px;width:940px;height:24px;background:#f5f9fd;"></div>
<div class="abs" style="left:8px;top:900px;width:940px;height:1px;background:#d3d9e6;"></div>
<div class="abs" style="left:8px;top:926px;width:940px;height:22px;background:#fff;border-radius:0 0 3px 3px"></div>
<div class="abs" style="left:8px;top:925px;width:940px;height:1px;background:#d3d9e6;"></div>
<div class="abs" style="left:121px;top:876px;width:1px;height:72px;background:#d3d9e6;"></div>
<div class="abs" style="left:243px;top:876px;width:1px;height:72px;background:#d3d9e6;"></div>
<div class="abs" style="left:384px;top:876px;width:1px;height:72px;background:#d3d9e6;"></div>
<div class="abs" style="left:665px;top:876px;width:1px;height:72px;background:#d3d9e6;"></div>
<div class="abs" style="left:806px;top:876px;width:1px;height:72px;background:#d3d9e6;"></div>
<div class="t " style="left:17px;top:876px;line-height:24px;letter-spacing:0.12px">D6010</div>
<div class="t " style="left:129.5px;top:876px;line-height:24px;letter-spacing:-0.16px">6 M + 1D</div>
<div class="t " style="left:251.5px;top:876px;line-height:24px;letter-spacing:0.00px">12/07/2023</div>
<div class="t " style="left:392.5px;top:876px;line-height:24px;letter-spacing:0.68px">Surgical Placement Implant</div>
<div class="t " style="left:675px;top:876px;line-height:24px;">-</div>
<div class="t " style="left:816px;top:876px;line-height:24px;">-</div>
<div class="t " style="left:17px;top:901px;line-height:24px;letter-spacing:-0.92px">D1110</div>
<div class="t " style="left:129.5px;top:901px;line-height:24px;letter-spacing:-0.16px">6 M + 1D</div>
<div class="t " style="left:251.5px;top:901px;line-height:24px;letter-spacing:-0.11px">11/05/2023</div>
<div class="t " style="left:392.5px;top:901px;line-height:24px;letter-spacing:0.56px">Prophylaxis - Adult</div>
<div class="t " style="left:675px;top:901px;line-height:24px;">-</div>
<div class="t " style="left:816px;top:901px;line-height:24px;">-</div>
<div class="t " style="left:17px;top:927px;line-height:22px;letter-spacing:0.02px">D0120</div>
<div class="t " style="left:129.5px;top:927px;line-height:22px;letter-spacing:-0.16px">6 M + 1D</div>
<div class="t " style="left:251.5px;top:927px;line-height:22px;letter-spacing:0.20px">08/12/2023</div>
<div class="t " style="left:392.5px;top:927px;line-height:22px;letter-spacing:0.49px">Periodic Oral Evaluation</div>
<div class="t " style="left:675px;top:927px;line-height:22px;">-</div>
<div class="t " style="left:816px;top:927px;line-height:22px;">-</div>
<div class="abs" style="left:939.5px;top:875.5px;width:8.5px;height:73.0px;background:#cfd2d5;border-radius:3px"></div>
<div class="abs" style="left:939.5px;top:875.5px;width:8.5px;height:29.5px;background:#b3c8dc;border-radius:3px"></div>
<div class="sh" style="left:959px;top:686px;letter-spacing:0.46px">BALANCES</div>
<div class="abs" style="left:959px;top:713px;width:942px;height:100px;background:#fff;border:1px solid #d3d9e6;border-radius:4px"></div>
<div class="abs" style="left:959px;top:713px;width:942px;height:24px;background:#0071c5;border-radius:4px 4px 0 0"></div>
<div class="t th" style="left:967px;top:713px;line-height:23px;letter-spacing:0.02px">Member</div>
<div class="t th" style="right:674px;top:713px;line-height:23px;letter-spacing:-0.14px">Current</div>
<div class="t th" style="right:582.5px;top:713px;line-height:23px;letter-spacing:-0.31px">Over 30</div>
<div class="t th" style="right:489px;top:713px;line-height:23px;letter-spacing:-0.17px">Over 60</div>
<div class="t th" style="right:396px;top:713px;line-height:23px;letter-spacing:-0.17px">Over 90</div>
<div class="t th" style="right:302.5px;top:713px;line-height:23px;letter-spacing:-0.55px">Over 120</div>
<div class="t th" style="right:209.5px;top:713px;line-height:23px;letter-spacing:-0.34px">Balance</div>
<div class="t th" style="right:116.5px;top:713px;line-height:23px;letter-spacing:-0.37px">Est Pat</div>
<div class="t th" style="right:22.5px;top:713px;line-height:23px;letter-spacing:-0.45px">Est Ins</div>
<div class="abs" style="left:960px;top:737px;width:940px;height:25px;background:#fff;"></div>
<div class="abs" style="left:960px;top:736px;width:940px;height:1px;background:#d3d9e6;"></div>
<div class="abs" style="left:960px;top:763px;width:940px;height:24px;background:#f5f9fd;"></div>
<div class="abs" style="left:960px;top:762px;width:940px;height:1px;background:#d3d9e6;"></div>
<div class="abs" style="left:960px;top:788px;width:940px;height:24px;background:#fff;border-radius:0 0 3px 3px"></div>
<div class="abs" style="left:960px;top:787px;width:940px;height:1px;background:#d3d9e6;"></div>
<div class="abs" style="left:1147px;top:738px;width:1px;height:74px;background:#d3d9e6;"></div>
<div class="abs" style="left:1240px;top:738px;width:1px;height:74px;background:#d3d9e6;"></div>
<div class="abs" style="left:1334px;top:738px;width:1px;height:74px;background:#d3d9e6;"></div>
<div class="abs" style="left:1427px;top:738px;width:1px;height:74px;background:#d3d9e6;"></div>
<div class="abs" style="left:1521px;top:738px;width:1px;height:74px;background:#d3d9e6;"></div>
<div class="abs" style="left:1614px;top:738px;width:1px;height:74px;background:#d3d9e6;"></div>
<div class="abs" style="left:1707px;top:738px;width:1px;height:74px;background:#d3d9e6;"></div>
<div class="abs" style="left:1801px;top:738px;width:1px;height:74px;background:#d3d9e6;"></div>
<div class="t lk" style="left:969px;top:738px;line-height:24px;letter-spacing:0.60px">Account Balance</div>
<div class="t " style="right:676px;top:738px;line-height:24px;letter-spacing:0.11px">($2,962.00)</div>
<div class="t " style="right:582px;top:738px;line-height:24px;letter-spacing:0.40px">$0.00</div>
<div class="t " style="right:489px;top:738px;line-height:24px;letter-spacing:0.40px">$0.00</div>
<div class="t " style="right:396px;top:738px;line-height:24px;letter-spacing:0.40px">$0.00</div>
<div class="t " style="right:302px;top:738px;line-height:24px;letter-spacing:0.40px">$0.00</div>
<div class="t lk" style="right:209px;top:738px;line-height:24px;letter-spacing:0.11px">($2,962.00)</div>
<div class="t lk" style="right:115px;top:738px;line-height:24px;letter-spacing:0.11px">($3,062.00)</div>
<div class="t lk" style="right:22px;top:738px;line-height:24px;letter-spacing:0.06px">$100.00</div>
<div class="t lk" style="left:969px;top:763px;line-height:24px;letter-spacing:0.29px">Farmer, JJ</div>
<div class="t " style="right:676px;top:763px;line-height:24px;letter-spacing:0.06px">($2,587.00)</div>
<div class="t " style="right:582px;top:763px;line-height:24px;letter-spacing:0.40px">$0.00</div>
<div class="t " style="right:489px;top:763px;line-height:24px;letter-spacing:0.40px">$0.00</div>
<div class="t " style="right:396px;top:763px;line-height:24px;letter-spacing:0.40px">$0.00</div>
<div class="t " style="right:302px;top:763px;line-height:24px;letter-spacing:0.40px">$0.00</div>
<div class="t lk" style="right:209px;top:763px;line-height:24px;letter-spacing:0.06px">($2,587.00)</div>
<div class="t lk" style="right:115px;top:763px;line-height:24px;letter-spacing:0.11px">($2,687.00)</div>
<div class="t lk" style="right:22px;top:763px;line-height:24px;letter-spacing:0.06px">$100.00</div>
<div class="t lk" style="left:969px;top:788px;line-height:24px;letter-spacing:0.68px">WhiteHart, Mark</div>
<div class="t " style="right:676px;top:788px;line-height:24px;letter-spacing:0.04px">($375.00)</div>
<div class="t " style="right:582px;top:788px;line-height:24px;letter-spacing:0.40px">$0.00</div>
<div class="t " style="right:489px;top:788px;line-height:24px;letter-spacing:0.40px">$0.00</div>
<div class="t " style="right:396px;top:788px;line-height:24px;letter-spacing:0.40px">$0.00</div>
<div class="t " style="right:302px;top:788px;line-height:24px;letter-spacing:0.40px">$0.00</div>
<div class="t lk" style="right:209px;top:788px;line-height:24px;letter-spacing:0.04px">($375.00)</div>
<div class="t lk" style="right:115px;top:788px;line-height:24px;letter-spacing:0.04px">($375.00)</div>
<div class="t lk" style="right:22px;top:788px;line-height:24px;letter-spacing:0.40px">$0.00</div>
<div class="abs" style="left:1891.5px;top:738px;width:8.5px;height:75px;background:#cbcfd2;border-radius:3px"></div>
<div class="abs" style="left:1891.5px;top:738px;width:8.5px;height:57px;background:#b3c8dc;border-radius:3px"></div>
<div class="sh" style="left:959px;top:824px;letter-spacing:0.52px">BILLING</div>
<div class="abs" style="left:959px;top:850px;width:466px;height:99px;background:#fff;border:1px solid #d3d9e6;border-radius:4px"></div>
<div class="abs" style="left:959px;top:850px;width:466px;height:24px;background:#0071c5;border-radius:4px 4px 0 0"></div>
<div class="t th" style="right:631px;top:850px;line-height:23px;letter-spacing:-0.02px">Amount</div>
<div class="t th" style="left:1293px;top:850px;line-height:23px;letter-spacing:0.08px">Date</div>
<div class="abs" style="left:960px;top:874px;width:464px;height:25px;background:#fff;"></div>
<div class="abs" style="left:960px;top:873px;width:464px;height:1px;background:#d3d9e6;"></div>
<div class="abs" style="left:960px;top:900px;width:464px;height:23px;background:#f5f9fd;"></div>
<div class="abs" style="left:960px;top:899px;width:464px;height:1px;background:#d3d9e6;"></div>
<div class="abs" style="left:960px;top:924px;width:464px;height:24px;background:#fff;border-radius:0 0 3px 3px"></div>
<div class="abs" style="left:960px;top:923px;width:464px;height:1px;background:#d3d9e6;"></div>
<div class="abs" style="left:1145px;top:875px;width:1px;height:73px;background:#d3d9e6;"></div>
<div class="abs" style="left:1285px;top:875px;width:1px;height:73px;background:#d3d9e6;"></div>
<div class="t " style="left:968px;top:874px;line-height:24px;letter-spacing:0.28px">Last Pat Pay</div>
<div class="t " style="right:631px;top:874px;line-height:24px;letter-spacing:0.49px">$500.00</div>
<div class="t " style="left:1293px;top:874px;line-height:24px;letter-spacing:0.45px">06/07/2023</div>
<div class="t " style="left:968px;top:900px;line-height:22px;letter-spacing:0.24px">Last Ins Pay</div>
<div class="t " style="right:631px;top:900px;line-height:22px;letter-spacing:0.40px">$0.00</div>
<div class="t " style="left:1293px;top:900px;line-height:22px;letter-spacing:0.45px">06/07/2023</div>
<div class="t " style="left:968px;top:924px;line-height:24px;letter-spacing:0.61px">Last Statement</div>
<div class="t " style="right:631px;top:924px;line-height:24px;letter-spacing:0.42px">$294.00</div>
<div class="t " style="left:1293px;top:924px;line-height:24px;letter-spacing:0.50px">06/02/2023</div>
<div class="sh" style="left:1435px;top:824px;letter-spacing:0.26px">CONTRACT</div>
<div class="abs" style="left:1435px;top:851px;width:466px;height:98px;background:#fff;border:1px solid #d3d9e6;border-radius:4px"></div>
<div class="abs" style="left:1435px;top:851px;width:466px;height:24px;background:#0071c5;border-radius:4px 4px 0 0"></div>
<div class="t th" style="left:1629.5px;top:851px;line-height:23px;letter-spacing:-0.52px">Reg</div>
<div class="t th" style="left:1769px;top:851px;line-height:23px;letter-spacing:-0.08px">Ortho</div>
<div class="abs" style="left:1436px;top:875px;width:464px;height:24px;background:#fff;"></div>
<div class="abs" style="left:1436px;top:874px;width:464px;height:1px;background:#d3d9e6;"></div>
<div class="abs" style="left:1436px;top:900px;width:464px;height:24px;background:#f5f9fd;"></div>
<div class="abs" style="left:1436px;top:899px;width:464px;height:1px;background:#d3d9e6;"></div>
<div class="abs" style="left:1436px;top:925px;width:464px;height:23px;background:#fff;border-radius:0 0 3px 3px"></div>
<div class="abs" style="left:1436px;top:924px;width:464px;height:1px;background:#d3d9e6;"></div>
<div class="abs" style="left:1621px;top:876px;width:1px;height:72px;background:#d3d9e6;"></div>
<div class="abs" style="left:1761px;top:876px;width:1px;height:72px;background:#d3d9e6;"></div>
<div class="t " style="left:1444px;top:875px;line-height:24px;letter-spacing:0.79px">Rem. Amount</div>
<div class="t " style="left:1630px;top:875px;line-height:24px;letter-spacing:0.20px">$2,687.00</div>
<div class="t " style="left:1769px;top:875px;line-height:24px;letter-spacing:0.06px">$168.00</div>
<div class="t " style="left:1444px;top:900px;line-height:24px;letter-spacing:0.52px">Rem. Payments</div>
<div class="t " style="left:1630px;top:900px;line-height:24px;">2</div>
<div class="t " style="left:1769px;top:900px;line-height:24px;">12</div>
<div class="t " style="left:1444px;top:926px;line-height:22px;letter-spacing:0.38px">Next Pay Date</div>
<div class="t " style="left:1630px;top:926px;line-height:22px;letter-spacing:0.50px">04/29/2023</div>
<div class="t " style="left:1769px;top:926px;line-height:22px;letter-spacing:0.50px">04/29/2023</div>
<div class="abs" style="left:1px;top:985px;width:1906px;height:1px;background:#dcdfee;"></div>
<div class="abs" style="left:1px;top:986px;width:1906px;height:2px;background:#fff;"></div>
<div class="abs" style="left:1px;top:988px;width:1906px;height:8px;background:#d3d7d9;"></div><!--/BOTTOM-->
<!--BTN--><style>.bt{position:absolute;font-size:11px;font-weight:bold;color:#fff;white-space:nowrap}</style>
<div class="abs" style="left:885px;top:174px;width:70px;height:30px;background:#c80000"></div>
<div class="abs" style="left:891px;top:180px;width:58px;height:18px;background:#0071c5;border-radius:0px"></div>
<svg class="abs" style="left:896.5px;top:183.5px" width="11" height="11" viewBox="0 0 11 11"><path d="M0.3 10.7 L0.8 7.3 L6.7 1.4 L9.6 4.3 L3.7 10.2 Z M7.5 0.6 L8.1 0 a1 1 0 0 1 1.4 0 L11 1.5 a1 1 0 0 1 0 1.4 L10.4 3.5 Z" fill="#fff"/></svg>
<div class="bt" style="left:915px;top:180px;line-height:16.5px;letter-spacing:-0.27px">EDIT</div>
<div class="abs" style="left:1832px;top:177px;width:61px;height:23px;background:#0071c5;border-radius:4px"></div>
<svg class="abs" style="left:1841.5px;top:183px" width="11" height="11" viewBox="0 0 11 11"><path d="M0.3 10.7 L0.8 7.3 L6.7 1.4 L9.6 4.3 L3.7 10.2 Z M7.5 0.6 L8.1 0 a1 1 0 0 1 1.4 0 L11 1.5 a1 1 0 0 1 0 1.4 L10.4 3.5 Z" fill="#fff"/></svg>
<div class="bt" style="left:1859.5px;top:178px;line-height:21.5px;letter-spacing:-0.39px">EDIT</div>
<div class="abs" style="left:1752px;top:517px;width:141px;height:24px;background:#0071c5;border-radius:4px"></div>
<svg class="abs" style="left:1761.5px;top:522.7px" width="9.8" height="9.8" viewBox="0 0 9.8 9.8"><path d="M3.6 0 H6.2 V3.6 H9.8 V6.2 H6.2 V9.8 H3.6 V6.2 H0 V3.6 H3.6 Z" fill="#fff"/></svg>
<div class="bt" style="left:1778.5px;top:517px;line-height:22.5px;letter-spacing:0.04px">ADD NEW MEMBER</div>
<div class="abs" style="left:517px;top:685px;width:116px;height:24px;background:#0071c5;border-radius:4px"></div>
<svg class="abs" style="left:526px;top:690px" width="12" height="12" viewBox="0 0 12 12"><path fill-rule="evenodd" d="M1 1.2 H11 a1 1 0 0 1 1 1 V10.8 a1 1 0 0 1 -1 1 H1 a1 1 0 0 1 -1 -1 V2.2 a1 1 0 0 1 1 -1 Z M1 4.2 V6 H3.2 V4.2 Z M4 4.2 V6 H6.2 V4.2 Z M7 4.2 V6 H9 V4.2 Z M9.8 4.2 V6 H11 V4.2 Z M1 6.8 V8.6 H3.2 V6.8 Z M4 6.8 V8.6 H6.2 V6.8 Z M7 6.8 V8.6 H9 V6.8 Z M9.8 6.8 V8.6 H11 V6.8 Z M1 9.4 V10.9 H3.2 V9.4 Z M4 9.4 V10.9 H6.2 V9.4 Z M7 9.4 V10.9 H9 V9.4 Z M9.8 9.4 V10.9 H11 V9.4 Z" fill="#fff"/><rect x="2.6" y="0" width="1.6" height="3" rx=".7" fill="#fff" stroke="#0071c5" stroke-width=".6"/><rect x="7.8" y="0" width="1.6" height="3" rx=".7" fill="#fff" stroke="#0071c5" stroke-width=".6"/></svg>
<div class="bt" style="left:544.5px;top:685px;line-height:22.5px;letter-spacing:-0.20px">ARCHIVE APPT</div>
<div class="abs" style="left:638px;top:685px;width:121px;height:24px;background:#0071c5;border-radius:4px"></div>
<svg class="abs" style="left:647.6px;top:690.8px" width="9.8" height="9.8" viewBox="0 0 9.8 9.8"><path d="M3.6 0 H6.2 V3.6 H9.8 V6.2 H6.2 V9.8 H3.6 V6.2 H0 V3.6 H3.6 Z" fill="#fff"/></svg>
<div class="bt" style="left:664.4px;top:685px;line-height:22.5px;letter-spacing:0.05px">ADD NEW APPT</div>
<div class="abs" style="left:764px;top:685px;width:185px;height:24px;background:#0071c5;border-radius:4px"></div>
<svg class="abs" style="left:773.5px;top:692.5px" width="13" height="7.6" viewBox="0 0 13 7.6"><path fill-rule="evenodd" d="M0 3.8 C2 0.9 4.2 0 6.5 0 C8.8 0 11 0.9 13 3.8 C11 6.7 8.8 7.6 6.5 7.6 C4.2 7.6 2 6.7 0 3.8 Z M1.3 3.8 C2.8 5.7 4.6 6.5 6.5 6.5 C8.4 6.5 10.2 5.7 11.7 3.8 C10.9 2.8 10 2.1 9.1 1.7 C9.5 2.3 9.7 2.9 9.7 3.6 C9.7 5.3 8.3 6.4 6.5 6.4 C4.7 6.4 3.3 5.3 3.3 3.6 C3.3 2.9 3.5 2.3 3.9 1.7 C3 2.1 2.1 2.8 1.3 3.8 Z" fill="#fff"/><path d="M6.5 1.3 a2.3 2.3 0 1 0 2.3 2.3 a1.2 1.2 0 0 1 -2.3 -0.9 Z" fill="#fff"/></svg>
<div class="bt" style="left:792.9px;top:685px;line-height:22.5px;letter-spacing:-0.16px">VIEW FUTURE FAMILY APPT</div>
<div class="abs" style="left:887px;top:823px;width:62px;height:24px;background:#0071c5;border-radius:4px"></div>
<svg class="abs" style="left:896.5px;top:829px" width="11" height="11" viewBox="0 0 11 11"><path d="M0.3 10.7 L0.8 7.3 L6.7 1.4 L9.6 4.3 L3.7 10.2 Z M7.5 0.6 L8.1 0 a1 1 0 0 1 1.4 0 L11 1.5 a1 1 0 0 1 0 1.4 L10.4 3.5 Z" fill="#fff"/></svg>
<div class="bt" style="left:915px;top:823px;line-height:22.5px;letter-spacing:-0.27px">EDIT</div>
<div class="abs" style="left:1815px;top:685px;width:78px;height:24px;background:#0071c5;border-radius:4px"></div>
<svg class="abs" style="left:1825px;top:690.5px" width="10" height="12" viewBox="0 0 10 12"><path fill-rule="evenodd" d="M1 0 H6.6 L10 3.4 V11 a1 1 0 0 1 -1 1 H1 a1 1 0 0 1 -1 -1 V1 a1 1 0 0 1 1 -1 Z M1.1 1.1 V10.9 H8.9 V4.4 H5.6 V1.1 Z" fill="#fff"/><path d="M2.6 5.6 H7.4 M2.6 7.4 H7.4 M2.6 9.2 H7.4" stroke="#fff" stroke-width=".9"/></svg>
<div class="bt" style="left:1839.5px;top:685px;line-height:22.5px;letter-spacing:-0.31px">LEDGER</div>
<div class="abs" style="left:1669px;top:823px;width:103px;height:24px;background:#0071c5;border-radius:4px"></div>
<svg class="abs" style="left:1678.6px;top:828.6px" width="11" height="11" viewBox="0 0 11 11"><path d="M0.3 10.7 L0.8 7.3 L6.7 1.4 L9.6 4.3 L3.7 10.2 Z M7.5 0.6 L8.1 0 a1 1 0 0 1 1.4 0 L11 1.5 a1 1 0 0 1 0 1.4 L10.4 3.5 Z" fill="#fff"/></svg>
<div class="bt" style="left:1697px;top:823px;line-height:22.5px;letter-spacing:-0.18px">EDIT ORTHO</div>
<div class="abs" style="left:1777px;top:823px;width:116px;height:24px;background:#0071c5;border-radius:4px"></div>
<svg class="abs" style="left:1786.5px;top:828.6px" width="11" height="11" viewBox="0 0 11 11"><path d="M0.3 10.7 L0.8 7.3 L6.7 1.4 L9.6 4.3 L3.7 10.2 Z M7.5 0.6 L8.1 0 a1 1 0 0 1 1.4 0 L11 1.5 a1 1 0 0 1 0 1.4 L10.4 3.5 Z" fill="#fff"/></svg>
<div class="bt" style="left:1805px;top:823px;line-height:22.5px;letter-spacing:-0.29px">EDIT REGULAR</div><!--/BTN-->
<!--MISC--><svg class="abs" style="left:0;top:170px;z-index:5;pointer-events:none" width="1908" height="690" viewBox="0 170 1908 690">

<g fill="#0a6fc6">
<path d="M157 179.2 H166 a1 1 0 0 1 1 1 V192 a1 1 0 0 1 -1 1 H158 a1 1 0 0 1 -1 -1 Z"/>
<path d="M156.4 176.8 H163.6 a1 1 0 0 1 1 1 V190 a1 1 0 0 1 -1 1 H155 a1 1 0 0 1 -1 -1 V179.2 Z" fill="#f4f6f9" stroke="#0a6fc6" stroke-width="1.1"/>
<rect x="159.6" y="180.8" width="2.6" height="1.1"/><rect x="156.4" y="183.4" width="5.8" height="1.1"/><rect x="156.4" y="186" width="5.8" height="2.2" opacity=".8"/>
<path d="M172 183.4 H186.6 C186.6 187 184.5 189.6 182.4 190.6 V192 H176.2 V190.6 C174.1 189.6 172 187 172 183.4 Z"/>
<path d="M182 183.6 L184.9 178.4 L187 179.6 L184.6 183.8 Z"/>
<circle cx="198" cy="180.5" r="3.8"/>
<path d="M192 192.9 V187.6 a2.5 2.5 0 0 1 2.5 -2.5 H199.1 a2.5 2.5 0 0 1 2.5 2.5 V192.9 Z"/>
<circle cx="204.1" cy="189.1" r="4.4" fill="#f4f6f9"/><circle cx="204.1" cy="189.1" r="3.7"/>
</g>
<path d="M176.6 187.2 l1.2 -1.6 l.9 .9 h2.4 v1.3 l-1.4 .9 h-2 z" fill="#f4f6f9"/>
<path d="M204.1 186.9 V191.3 M201.9 189.1 H206.3" stroke="#fff" stroke-width="1.1"/>

<g fill="#0a6fc6"><rect x="1092.2" y="178.9" width="12.8" height="14.3" rx="2.2"/><rect x="1095" y="177" width="1.3" height="2.6"/><rect x="1098" y="177" width="1.3" height="2.6"/><rect x="1101" y="177" width="1.3" height="2.6"/></g>
<text x="1098.6" y="190.4" font-family="Liberation Sans" font-weight="bold" font-size="10.5" text-anchor="middle" fill="#fff">$</text>

<circle cx="581.3" cy="441.8" r="5.1" fill="#0a6fc6"/><rect x="580.6" y="440.6" width="1.7" height="4" fill="#fff"/><rect x="579.8" y="440.6" width="1.6" height=".9" fill="#fff"/><rect x="579.8" y="444" width="3.3" height=".9" fill="#fff"/><circle cx="581.4" cy="438.8" r="1" fill="#fff"/>

<circle cx="1788.9" cy="242" r="7" fill="#228b22"/><path d="M1786 242 L1788.2 244 L1792 240" fill="none" stroke="#fff" stroke-width="1.5"/>

<g id="eq"><rect x="1355" y="329" width="12.8" height="14.2" rx="2.2" fill="#fff"/><path d="M1358 332.4 H1363.4 V333.8 H1359.6 V335.5 H1363 V336.9 H1359.6 V338.7 H1363.5 V340.1 H1358 Z" fill="#0071c5"/><circle cx="1369.2" cy="341.2" r="4.3" fill="#0071c5"/>
<text x="1369.4" y="344.7" font-family="Liberation Sans" font-weight="bold" font-size="11" text-anchor="middle" fill="#ff9c10">?</text></g>
<use href="#eq" x="373"/>
<path d="M1754.9 328 H1762.8 L1767.9 333 V342 a2 2 0 0 1 -2 2 H1754.9 a2 2 0 0 1 -2 -2 V330 a2 2 0 0 1 2 -2 Z" fill="#fff"/><path d="M1762.6 328.4 V333.2 H1767.6" fill="none" stroke="#0071c5" stroke-width=".9"/>
<path d="M1758.8 329.6 V334.2 M1756.4 331.9 H1761.2 M1756 336.6 H1765 M1756 340 H1765" stroke="#0071c5" stroke-width="1.2"/>

<circle cx="1657.5" cy="826.8" r="4.1" fill="#0a820a"/><text x="1657.5" y="829.6" font-family="Liberation Sans" font-weight="bold" font-size="7.5" text-anchor="middle" fill="#fff">$</text>
<path d="M1652.3 834 C1653.5 832 1655 831.8 1656.5 831.9 H1659.5 C1660.8 831.9 1660.8 833.6 1659.5 833.6 H1656.8 V834.3 H1660 C1661.5 833.8 1662.8 832.6 1663.9 832.2 C1663 834.5 1660.5 836.9 1658.5 836.9 H1653.8 Z" fill="#0a820a"/>
<path d="M1647.8 834.4 L1651.2 832.8 L1653.2 837.6 L1649.8 839.2 Z" fill="#0a820a"/>

<rect x="938" y="455" width="9" height="43.5" rx="4" fill="#c9cdd0"/><rect x="938" y="525.5" width="9" height="50.5" rx="4" fill="#b3c8dc"/><rect x="938" y="577.5" width="9" height="63.5" rx="4" fill="#b3c8dc"/>
</svg>
<!--/MISC-->
<!--CONTENT-->
<div id="footer" class="abs">&copy; 2023 Planet DDS | <a>Privacy Policy</a> |&nbsp; Page Time Left (hh:mm:ss) 1:59:2</div>
<div id="winborderL" class="abs"></div><div id="winborderR" class="abs"></div><div id="winborderB" class="abs"></div>
</body></html>
